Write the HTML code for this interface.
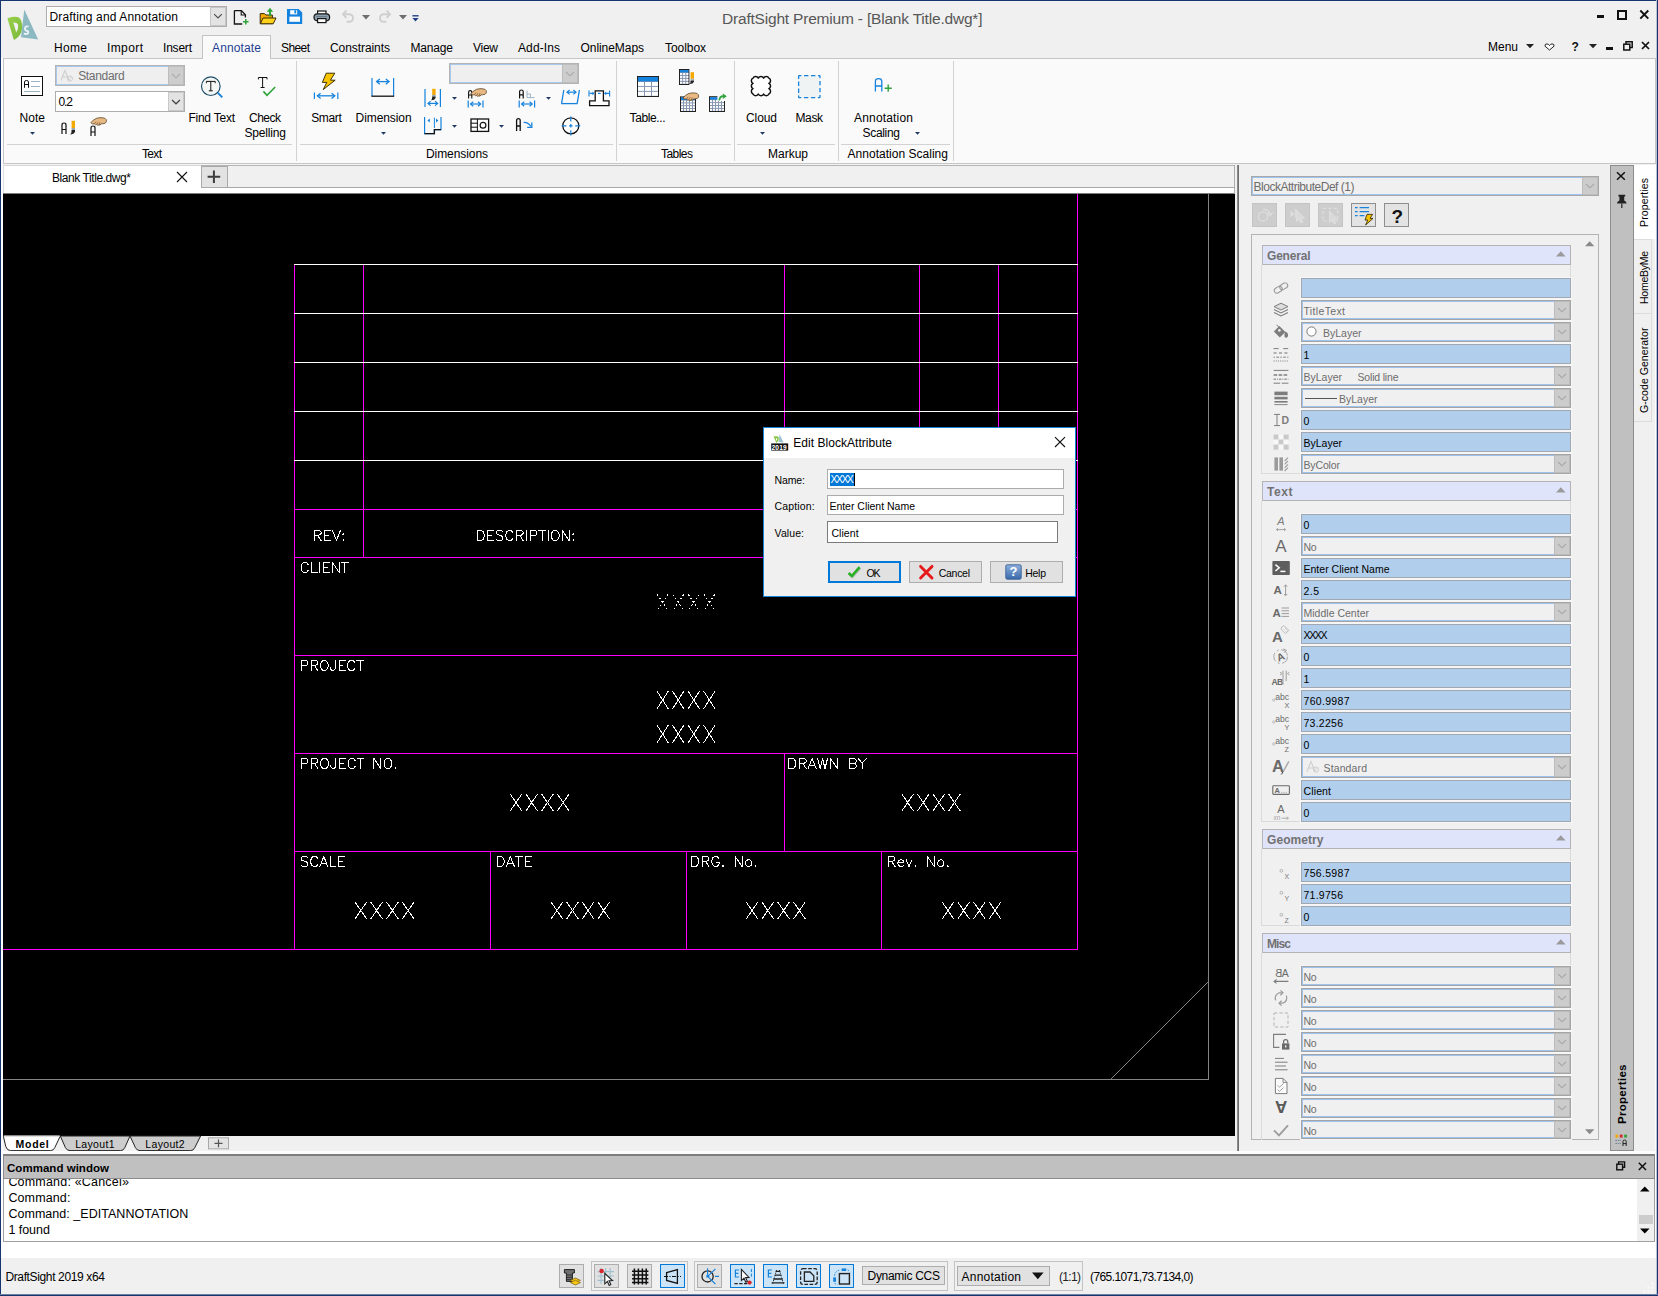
<!DOCTYPE html>
<html><head><meta charset="utf-8"><title>DraftSight Premium - [Blank Title.dwg*]</title>
<style>
html,body{margin:0;padding:0;}
body{width:1658px;height:1296px;overflow:hidden;background:#f0f0f0;font-family:"Liberation Sans", sans-serif;position:relative;}
div,svg{position:absolute;box-sizing:border-box;}
svg{overflow:visible;}
</style></head><body>
<div style="left:3px;top:58px;width:1653px;height:106px;background:#fafafa;border:1px solid #c6c6c6;"></div>
<div style="left:202px;top:35px;width:69px;height:24px;background:#fafafa;border:1px solid #c3c3c3;border-bottom:none;"></div>
<svg style="left:4px;top:6px;" width="38" height="38" viewBox="0 0 38 38"><defs><linearGradient id="lgD" x1="0" y1="0" x2="1" y2="1"><stop offset="0" stop-color="#9ad04a"/><stop offset="1" stop-color="#7ab83a"/></linearGradient></defs><path d="M20.3 3.6 L34.2 33.6 L17 31.2 Z" fill="#8cb8c2"/><path d="M3.4 12.2 Q10 10.2 14.5 11.2 Q18.6 14 18.2 22 Q17.5 29.5 10.8 33.8 L9.6 33.2 Z M9.3 16.6 L12.2 26.6 Q14.6 23.5 14.2 19.6 Q13.6 16.4 9.3 16.6 Z" fill="url(#lgD)" fill-rule="evenodd"/><path d="M24.6 20.6 Q21.2 19.8 20.9 22.4 Q20.8 24.4 23.2 25 Q24.8 25.6 24 27.2 Q23 28.6 19.8 27.6" fill="none" stroke="#e8f2f4" stroke-width="1.9"/></svg>
<div style="left:46px;top:6px;width:181px;height:21px;background:#fff;border:1px solid #adadad;"></div>
<div style="left:210px;top:7px;width:16px;height:19px;background:#e3e3e3;border:1px solid #c6c6c6;"></div>
<svg style="left:213px;top:13px;" width="10" height="7" viewBox="0 0 10 7"><path d="M1.2 1.2 L5 5 L8.8 1.2" fill="none" stroke="#505050" stroke-width="1.2"/></svg>
<div style="left:49.5px;top:11px;font-size:12px;line-height:12px;color:#000;white-space:pre;letter-spacing:0.139px;">Drafting and Annotation</div>
<svg style="left:233px;top:9px;" width="17" height="17" viewBox="0 0 17 17"><path d="M1.4 1.6 H8.4 L12.4 5.8 V8.6 M9.2 15 H1.4 V1.6" fill="none" stroke="#151515" stroke-width="1.3"/><path d="M8.2 1.8 V6 H12.4" fill="none" stroke="#151515" stroke-width="1.1"/><path d="M10 12.8 H15.6 M12.8 10 V15.6" stroke="#2ea43a" stroke-width="1.5"/></svg>
<svg style="left:259px;top:7px;" width="18" height="18" viewBox="0 0 18 18"><path d="M1.2 6.6 H5.4 L6.8 8 H13.4 V16.6 H1.2 Z" fill="#f5a800" stroke="#3a2a08" stroke-width="1"/><path d="M1.4 16.8 L4 11 H17 L14.2 16.8 Z" fill="#ffd21a" stroke="#3a2a08" stroke-width="1"/><path d="M11 9.6 V4" stroke="#2ea43a" stroke-width="2"/><path d="M7.8 4.8 L11 0.8 L14.2 4.8 Z" fill="#2ea43a"/></svg>
<svg style="left:287px;top:9px;" width="16" height="16" viewBox="0 0 16 16"><path d="M0 0 H11.6 L15.2 3.6 V15 H0 Z" fill="#1583dd"/><rect x="3.2" y="1.2" width="7" height="4.2" fill="#fff"/><rect x="7.4" y="1.2" width="1.8" height="3.2" fill="#1583dd"/><rect x="2.4" y="7.6" width="10.6" height="5.2" fill="#fff"/></svg>
<svg style="left:313px;top:10px;" width="18" height="14" viewBox="0 0 18 14"><rect x="4.6" y="1" width="8.4" height="3.6" fill="#fff" stroke="#151515" stroke-width="1.2"/><rect x="1" y="3.8" width="15.6" height="7" rx="3.2" fill="#8ea0ad" stroke="#151515" stroke-width="1.2"/><rect x="4.6" y="8.6" width="8.4" height="4" fill="#fff" stroke="#151515" stroke-width="1.2"/><path d="M3.4 6.6 H14.2" stroke="#5a6a76" stroke-width="0.8"/></svg>
<svg style="left:341px;top:9px;" width="14" height="15" viewBox="0 0 14 15"><path d="M2.4 5.2 H8 Q12 5.2 12 9 Q12 12.8 8 12.8 H5.6" fill="none" stroke="#cfcfcf" stroke-width="1.9"/><path d="M5.4 1.6 L2 5.2 L5.4 8.8" fill="none" stroke="#cfcfcf" stroke-width="1.9"/></svg>
<svg style="left:362px;top:14.5px;" width="8" height="5" viewBox="0 0 8 5"><path d="M0 0 H8 L4 4.6 Z" fill="#6e6e6e"/></svg>
<svg style="left:378px;top:9px;" width="14" height="15" viewBox="0 0 14 15"><path d="M11.6 5.2 H6 Q2 5.2 2 9 Q2 12.8 6 12.8 H8.4" fill="none" stroke="#cfcfcf" stroke-width="1.9"/><path d="M8.6 1.6 L12 5.2 L8.6 8.8" fill="none" stroke="#cfcfcf" stroke-width="1.9"/></svg>
<svg style="left:399px;top:14.5px;" width="8" height="5" viewBox="0 0 8 5"><path d="M0 0 H8 L4 4.6 Z" fill="#6e6e6e"/></svg>
<svg style="left:412px;top:14.5px;" width="7" height="7" viewBox="0 0 7 7"><path d="M0.4 0.8 H6.6" stroke="#1f3f8a" stroke-width="1.4"/><path d="M0.4 3 H6.6 L3.5 6.4 Z" fill="#1f3f8a"/></svg>
<div style="left:722px;top:11px;font-size:15.5px;line-height:15.5px;color:#575757;white-space:pre;letter-spacing:-0.195px;">DraftSight Premium - [Blank Title.dwg*]</div>
<div style="left:1597px;top:15px;width:7px;height:3px;background:#111;"></div>
<div style="left:1617px;top:10px;width:10px;height:10px;border:2px solid #111;border-top-width:2px;"></div>
<svg style="left:1639px;top:9px;" width="11" height="11" viewBox="0 0 11 11"><path d="M1.3 1.5 L9.3 9.7 M9.3 1.5 L1.3 9.7" stroke="#111" stroke-width="1.9"/></svg>
<div style="left:54px;top:42px;font-size:12px;line-height:12px;color:#000;white-space:pre;letter-spacing:0.328px;">Home</div>
<div style="left:107px;top:42px;font-size:12px;line-height:12px;color:#000;white-space:pre;letter-spacing:0.397px;">Import</div>
<div style="left:163px;top:42px;font-size:12px;line-height:12px;color:#000;white-space:pre;letter-spacing:-0.203px;">Insert</div>
<div style="left:212px;top:42px;font-size:12px;line-height:12px;color:#1e3f94;white-space:pre;letter-spacing:0.136px;">Annotate</div>
<div style="left:281px;top:42px;font-size:12px;line-height:12px;color:#000;white-space:pre;letter-spacing:-0.590px;">Sheet</div>
<div style="left:330px;top:42px;font-size:12px;line-height:12px;color:#000;white-space:pre;letter-spacing:-0.070px;">Constraints</div>
<div style="left:410.5px;top:42px;font-size:12px;line-height:12px;color:#000;white-space:pre;letter-spacing:-0.175px;">Manage</div>
<div style="left:473px;top:42px;font-size:12px;line-height:12px;color:#000;white-space:pre;letter-spacing:-0.266px;">View</div>
<div style="left:518px;top:42px;font-size:12px;line-height:12px;color:#000;white-space:pre;letter-spacing:0.107px;">Add-Ins</div>
<div style="left:580.5px;top:42px;font-size:12px;line-height:12px;color:#000;white-space:pre;letter-spacing:-0.059px;">OnlineMaps</div>
<div style="left:665px;top:42px;font-size:12px;line-height:12px;color:#000;white-space:pre;letter-spacing:-0.062px;">Toolbox</div>
<div style="left:1488px;top:41px;font-size:12px;line-height:12px;color:#000;white-space:pre;letter-spacing:-0.010px;">Menu</div>
<svg style="left:1526px;top:44px;" width="8" height="5" viewBox="0 0 8 5"><path d="M0 0 H8 L4 4.2 Z" fill="#222"/></svg>
<svg style="left:1544px;top:43px;" width="11" height="8" viewBox="0 0 11 8"><path d="M5.5 7 L1 3.2 Q0.6 0.8 3 0.9 Q4.6 1 5.5 2.6 Q6.4 1 8 0.9 Q10.4 0.8 10 3.2 Z" fill="#fff" stroke="#222" stroke-width="1"/></svg>
<div style="left:1571.5px;top:41px;font-size:12px;line-height:12px;color:#111;white-space:pre;font-weight:700;">?</div>
<svg style="left:1589px;top:44px;" width="8" height="5" viewBox="0 0 8 5"><path d="M0 0 H8 L4 4.2 Z" fill="#222"/></svg>
<div style="left:1606px;top:47px;width:7px;height:3px;background:#111;"></div>
<svg style="left:1623px;top:41px;" width="10" height="10" viewBox="0 0 10 10"><path d="M3 3 V0.8 H9.2 V6.5 H7" fill="none" stroke="#111" stroke-width="1.5"/><rect x="0.8" y="3.2" width="6" height="5.8" fill="none" stroke="#111" stroke-width="1.5"/></svg>
<svg style="left:1641px;top:41px;" width="9" height="9" viewBox="0 0 9 9"><path d="M1 1 L8 8 M8 1 L1 8" stroke="#111" stroke-width="1.7"/></svg>
<div style="left:296px;top:61px;width:1px;height:100px;background:#d2d2d2;"></div>
<div style="left:616px;top:61px;width:1px;height:100px;background:#d2d2d2;"></div>
<div style="left:734px;top:61px;width:1px;height:100px;background:#d2d2d2;"></div>
<div style="left:838px;top:61px;width:1px;height:100px;background:#d2d2d2;"></div>
<div style="left:953px;top:61px;width:1px;height:100px;background:#d2d2d2;"></div>
<div style="left:7px;top:144px;width:285px;height:1px;background:#d2d2d2;"></div>
<div style="left:300px;top:144px;width:313px;height:1px;background:#d2d2d2;"></div>
<div style="left:619px;top:144px;width:112px;height:1px;background:#d2d2d2;"></div>
<div style="left:737px;top:144px;width:98px;height:1px;background:#d2d2d2;"></div>
<div style="left:841px;top:144px;width:109px;height:1px;background:#d2d2d2;"></div>
<div style="left:142px;top:148px;font-size:12px;line-height:12px;color:#000;white-space:pre;letter-spacing:-0.672px;">Text</div>
<div style="left:426px;top:148px;font-size:12px;line-height:12px;color:#000;white-space:pre;letter-spacing:-0.078px;">Dimensions</div>
<div style="left:661px;top:148px;font-size:12px;line-height:12px;color:#000;white-space:pre;letter-spacing:-0.537px;">Tables</div>
<div style="left:768px;top:148px;font-size:12px;line-height:12px;color:#000;white-space:pre;letter-spacing:-0.003px;">Markup</div>
<div style="left:847.5px;top:148px;font-size:12px;line-height:12px;color:#000;white-space:pre;letter-spacing:0.025px;">Annotation Scaling</div>
<svg style="left:20px;top:75px;" width="24" height="22" viewBox="0 0 24 22"><rect x="1.5" y="1.5" width="21" height="19" fill="#fff" stroke="#111" stroke-width="1"/><path d="M4.5 12.8 V7 Q4.5 5.5 6.5 5.5 Q8.5 5.5 8.5 7 V12.8 M4.5 9.5 H8.5" fill="none" stroke="#111" stroke-width="1"/><path d="M11 6.5 H20 M11 11.5 H20 M4 16.5 H20" stroke="#9db4c4" stroke-width="1"/></svg>
<div style="left:19.6px;top:112px;font-size:12px;line-height:12px;color:#000;white-space:pre;letter-spacing:0.014px;">Note</div>
<svg style="left:29.799999999999997px;top:132px;" width="5" height="3" viewBox="0 0 5 3"><path d="M0 0 H5 L2.5 2.8 Z" fill="#1f3864"/></svg>
<div style="left:55px;top:65px;width:130px;height:21px;background:#e8e8e8;border:1px solid #b4b4b4;"></div>
<div style="left:56px;top:66px;width:113px;height:19px;background:#efefef;border:1px solid #a9c9ec;"></div>
<div style="left:168px;top:66px;width:16px;height:19px;background:#cdcdcd;border:1px solid #bdbdbd;"></div>
<svg style="left:171px;top:72.5px;" width="10" height="6" viewBox="0 0 10 6"><path d="M1 1 L5 4.8 L9 1" fill="none" stroke="#ababab" stroke-width="1.1"/></svg>
<svg style="left:60px;top:69px;" width="14" height="13" viewBox="0 0 14 13"><path d="M1 11.5 L5 1.5 L9 11.5 M2.6 8 H7.4" fill="none" stroke="#cfcfcf" stroke-width="1.1"/><circle cx="10" cy="9.6" r="2.6" fill="none" stroke="#cfcfcf" stroke-width="1"/><path d="M8.2 11.4 L11.8 7.8" stroke="#cfcfcf" stroke-width="1"/></svg>
<div style="left:78.2px;top:70px;font-size:12px;line-height:12px;color:#6d6d6d;white-space:pre;letter-spacing:-0.329px;">Standard</div>
<div style="left:55px;top:91px;width:130px;height:21px;background:#fff;border:1px solid #adadad;"></div>
<div style="left:168px;top:92px;width:16px;height:19px;background:#e3e3e3;border:1px solid #c9c9c9;"></div>
<svg style="left:171px;top:98.5px;" width="10" height="6" viewBox="0 0 10 6"><path d="M1 1 L5 4.8 L9 1" fill="none" stroke="#444" stroke-width="1.2"/></svg>
<div style="left:58.5px;top:96px;font-size:12px;line-height:12px;color:#000;white-space:pre;letter-spacing:-1.094px;">0.2</div>
<svg style="left:60px;top:120px;" width="18" height="16" viewBox="0 0 18 16"><path d="M2 14 V5 Q2 3 4 3 Q6 3 6 5 V14 M2 9.5 H6" fill="none" stroke="#111" stroke-width="1.2"/><rect x="11.6" y="0.8" width="3.4" height="7.4" fill="#f5a800"/><rect x="11.6" y="8" width="3.4" height="2" fill="#9aa7b0"/><path d="M11.6 10 H15 V12 Q14 14.6 10.2 14.4 Q11.8 13 11.6 10 Z" fill="#222"/></svg>
<svg style="left:89px;top:116px;" width="20" height="21" viewBox="0 0 20 21"><path d="M2 20 V12 Q2 10 4 10 Q6 10 6 12 V20 M2 16 H6" fill="none" stroke="#111" stroke-width="1.2"/><g transform="translate(1.4,1.2)"><path d="M0.4 5.6 Q2.6 2.4 6.4 1 Q10.6 -0.2 14.4 1 Q16.6 2.2 16 4.6 Q15.4 6.4 12.4 6.6 L10.6 6.6 Q10 8.4 8.4 7.8 Q7.4 8.6 6.2 7.4 Q5 8 4 6.6 Q2.4 7.4 0.4 5.6 Z" fill="#e9b983" stroke="#4a3418" stroke-width="0.7"/><path d="M5.6 4.4 L4.2 6.4 M7.6 4.8 L6.4 7.2 M9.6 5 L8.6 7.6" stroke="#4a3418" stroke-width="0.5" fill="none"/></g></svg>
<svg style="left:200px;top:75px;" width="24" height="24" viewBox="0 0 24 24"><circle cx="10.8" cy="11.2" r="9.3" fill="#f5f7f7" stroke="#1f4e69" stroke-width="1.2"/><path d="M6.4 8.2 V6.4 H15.2 V8.2 M10.8 6.4 V15.8 M8.8 15.8 H12.8" fill="none" stroke="#111" stroke-width="1"/><path d="M18 18 L22.3 22.3" stroke="#1583dd" stroke-width="1.8"/></svg>
<div style="left:188.4px;top:112px;font-size:12px;line-height:12px;color:#000;white-space:pre;letter-spacing:-0.234px;">Find Text</div>
<svg style="left:255px;top:76px;" width="22" height="22" viewBox="0 0 22 22"><path d="M3.4 3.4 V1.5 H12 V3.4 M7.6 1.5 V11.5 M5.6 11.5 H9.6" fill="none" stroke="#111" stroke-width="1"/><path d="M8.4 15.4 L12 19.4 L20.2 11" fill="none" stroke="#2ea43a" stroke-width="1.6"/></svg>
<div style="left:249px;top:112px;font-size:12px;line-height:12px;color:#000;white-space:pre;letter-spacing:-0.504px;">Check</div>
<div style="left:244.5px;top:127px;font-size:12px;line-height:12px;color:#000;white-space:pre;letter-spacing:-0.172px;">Spelling</div>
<svg style="left:312px;top:72px;" width="28" height="28" viewBox="0 0 28 28"><path d="M14.2 1.2 L22.8 1.2 L18.4 8.2 L23.2 8.2 L11.2 17.6 L14.8 10.4 L10.4 10.4 Z" fill="#f8c400" stroke="#2b2100" stroke-width="0.9"/><path d="M2.4 20.6 V27 M25.8 20.6 V27" stroke="#1583dd" stroke-width="1.2"/><path d="M5.5 23.8 H22.8" stroke="#1583dd" stroke-width="1.3"/><path d="M8.6 21.2 L5.4 23.8 L8.6 26.4 M19.6 21.2 L22.8 23.8 L19.6 26.4" fill="none" stroke="#1583dd" stroke-width="1.3"/></svg>
<div style="left:311.2px;top:112px;font-size:12px;line-height:12px;color:#000;white-space:pre;letter-spacing:-0.329px;">Smart</div>
<svg style="left:370px;top:77px;" width="26" height="21" viewBox="0 0 26 21"><path d="M2 1 V19 M23.6 1 V19" stroke="#1583dd" stroke-width="1.2"/><path d="M1.4 19.2 H24.2" stroke="#111" stroke-width="1.3"/><path d="M7 4.6 H18.6" stroke="#1583dd" stroke-width="1.3"/><path d="M9.8 2 L6.6 4.6 L9.8 7.2 M15.8 2 L19 4.6 L15.8 7.2" fill="none" stroke="#1583dd" stroke-width="1.3"/></svg>
<div style="left:355.6px;top:112px;font-size:12px;line-height:12px;color:#000;white-space:pre;letter-spacing:-0.088px;">Dimension</div>
<svg style="left:381.0px;top:132px;" width="5" height="3" viewBox="0 0 5 3"><path d="M0 0 H5 L2.5 2.8 Z" fill="#1f3864"/></svg>
<div style="left:449px;top:63px;width:130px;height:21px;background:#e8e8e8;border:1px solid #b4b4b4;"></div>
<div style="left:450px;top:64px;width:113px;height:19px;background:#efefef;border:1px solid #a9c9ec;"></div>
<div style="left:562px;top:64px;width:16px;height:19px;background:#cdcdcd;border:1px solid #bdbdbd;"></div>
<svg style="left:565px;top:70.5px;" width="10" height="6" viewBox="0 0 10 6"><path d="M1 1 L5 4.8 L9 1" fill="none" stroke="#ababab" stroke-width="1.1"/></svg>
<svg style="left:423px;top:88px;" width="20" height="20" viewBox="0 0 20 20"><path d="M2 1 V19 M17.4 1 V19" stroke="#1583dd" stroke-width="1.2"/><path d="M5 15.4 H14.6" stroke="#1583dd" stroke-width="1.2"/><path d="M7.6 13.2 L5 15.4 L7.6 17.6 M12.0 13.2 L14.6 15.4 L12.0 17.6" fill="none" stroke="#1583dd" stroke-width="1.2"/><rect x="9.2" y="0.8" width="3.4" height="6.2" fill="#f5a800"/><rect x="9.2" y="6.8" width="3.4" height="1.8" fill="#9aa7b0"/><path d="M9.2 8.6 H12.6 V10 Q11.6 12.4 8 12.2 Q9.4 11 9.2 8.6 Z" fill="#222"/></svg>
<svg style="left:452.3px;top:97px;" width="5" height="3" viewBox="0 0 5 3"><path d="M0 0 H5 L2.5 2.8 Z" fill="#1f3864"/></svg>
<svg style="left:467px;top:88px;" width="21" height="20" viewBox="0 0 21 20"><path d="M1.6 10.4 V4.2 Q1.6 2.6 3.2 2.6 Q4.8 2.6 4.8 4.2 V10.4 M1.6 7 H4.8" fill="none" stroke="#111" stroke-width="1.1"/><g transform="translate(3.4,0.2)"><path d="M0.4 5.6 Q2.6 2.4 6.4 1 Q10.6 -0.2 14.4 1 Q16.6 2.2 16 4.6 Q15.4 6.4 12.4 6.6 L10.6 6.6 Q10 8.4 8.4 7.8 Q7.4 8.6 6.2 7.4 Q5 8 4 6.6 Q2.4 7.4 0.4 5.6 Z" fill="#e9b983" stroke="#4a3418" stroke-width="0.7"/><path d="M5.6 4.4 L4.2 6.4 M7.6 4.8 L6.4 7.2 M9.6 5 L8.6 7.6" stroke="#4a3418" stroke-width="0.5" fill="none"/></g><path d="M1.2 12.6 V19.4 M16 12.6 V19.4" stroke="#1583dd" stroke-width="1.2"/><path d="M3.6 16 H13.6" stroke="#1583dd" stroke-width="1.2"/><path d="M6.2 13.8 L3.6 16 L6.2 18.2 M11.0 13.8 L13.6 16 L11.0 18.2" fill="none" stroke="#1583dd" stroke-width="1.2"/></svg>
<svg style="left:518px;top:88px;" width="19" height="20" viewBox="0 0 19 20"><path d="M1.6 10.4 V3.6 Q1.6 2 3.4 2 Q5.2 2 5.2 3.6 V10.4 M1.6 6.8 H5.2" fill="none" stroke="#111" stroke-width="1.2"/><path d="M9 2.6 V9.6 H16.6 M9 6 H12.4 V9.6" fill="none" stroke="#9bb4c8" stroke-width="1"/><path d="M1.2 12.6 V19.4 M16.6 12.6 V19.4" stroke="#1583dd" stroke-width="1.2"/><path d="M3.6 16 H14.2" stroke="#1583dd" stroke-width="1.2"/><path d="M6.2 13.8 L3.6 16 L6.2 18.2 M11.6 13.8 L14.2 16 L11.6 18.2" fill="none" stroke="#1583dd" stroke-width="1.2"/></svg>
<svg style="left:546.0px;top:97px;" width="5" height="3" viewBox="0 0 5 3"><path d="M0 0 H5 L2.5 2.8 Z" fill="#1f3864"/></svg>
<svg style="left:560px;top:88px;" width="21" height="18" viewBox="0 0 21 18"><path d="M3.8 2 L1.6 15.4 M19.4 2 L17.2 15.4" stroke="#1583dd" stroke-width="1.3"/><path d="M1.2 15.6 H17.6" stroke="#1583dd" stroke-width="1.3"/><path d="M7 4.2 H16" stroke="#1583dd" stroke-width="1.2"/><path d="M9.6 2.0 L7 4.2 L9.6 6.4 M13.4 2.0 L16 4.2 L13.4 6.4" fill="none" stroke="#1583dd" stroke-width="1.2"/></svg>
<svg style="left:588px;top:88px;" width="23" height="19" viewBox="0 0 23 19"><path d="M1.6 17.6 H21 V12.8 H15.4 V2.8 H7.2 V12.8 H1.6 Z" fill="#fff" stroke="#111" stroke-width="1.3"/><path d="M1 2.4 V8.6 M21.6 2.4 V8.6" stroke="#1583dd" stroke-width="1.1"/><path d="M1.6 5.4 H6 M16.6 5.4 H21 M10 5.4 H12.6" stroke="#1583dd" stroke-width="1.1"/><path d="M4.4 3.6 L6.4 5.4 L4.4 7.2 Z M18.2 3.6 L16.2 5.4 L18.2 7.2 Z" fill="#1583dd"/></svg>
<svg style="left:423px;top:116px;" width="20" height="19" viewBox="0 0 20 19"><path d="M1.6 1 V17.6 H11.4 V13.6 H18 V1" fill="none" stroke="#1583dd" stroke-width="1.2"/><path d="M1.6 17.6 H11.4 V13.6 H18" fill="none" stroke="#111" stroke-width="1.3"/><path d="M6.8 2.6 L4.4 4.6 L6.8 6.6 Z M13 2.6 L15.4 4.6 L13 6.6 Z" fill="#1583dd"/><path d="M11.4 1.6 V12" stroke="#1583dd" stroke-width="1"/></svg>
<svg style="left:452.3px;top:124.6px;" width="5" height="3" viewBox="0 0 5 3"><path d="M0 0 H5 L2.5 2.8 Z" fill="#1f3864"/></svg>
<svg style="left:470px;top:118px;" width="20" height="15" viewBox="0 0 20 15"><rect x="1" y="1" width="17.6" height="12.4" fill="#fff" stroke="#111" stroke-width="1.3"/><path d="M7.4 1 V13.4 M1 5.2 H7.4 M1 9.2 H7.4" stroke="#111" stroke-width="1"/><circle cx="13" cy="7.2" r="2.9" fill="none" stroke="#111" stroke-width="1.2"/></svg>
<svg style="left:499.1px;top:124.6px;" width="5" height="3" viewBox="0 0 5 3"><path d="M0 0 H5 L2.5 2.8 Z" fill="#1f3864"/></svg>
<svg style="left:515px;top:117px;" width="19" height="16" viewBox="0 0 19 16"><path d="M1.6 14 V3.6 Q1.6 1.6 3.4 1.6 Q5.2 1.6 5.2 3.6 V14 M1.6 9 H5.2" fill="none" stroke="#111" stroke-width="1.3"/><path d="M8.6 5.4 Q13 5 15.8 9.4" fill="none" stroke="#1583dd" stroke-width="1.3"/><path d="M16.8 5.6 V10.4 H12.2" fill="none" stroke="#1583dd" stroke-width="1.3"/></svg>
<svg style="left:561px;top:116px;" width="20" height="20" viewBox="0 0 20 20"><circle cx="9.8" cy="9.8" r="8" fill="#fff" stroke="#111" stroke-width="1.3"/><path d="M9.8 0.4 V5.4 M9.8 14.2 V19.4 M0.6 9.8 H5.4 M14.2 9.8 H19.2 M8 9.8 H11.6 M9.8 8 V11.6" stroke="#1583dd" stroke-width="1.2"/></svg>
<svg style="left:637px;top:76px;" width="22" height="21" viewBox="0 0 22 21"><rect x="0" y="0" width="22" height="21" fill="#222"/><rect x="1" y="1" width="20" height="19" fill="#8797b2"/><rect x="1" y="1" width="20" height="4.4" fill="#1583dd"/><rect x="1.00" y="6.00" width="6.00" height="3.93" fill="#fff"/><rect x="1.00" y="10.93" width="6.00" height="3.93" fill="#fff"/><rect x="1.00" y="15.87" width="6.00" height="3.93" fill="#fff"/><rect x="8.00" y="6.00" width="6.00" height="3.93" fill="#fff"/><rect x="8.00" y="10.93" width="6.00" height="3.93" fill="#fff"/><rect x="8.00" y="15.87" width="6.00" height="3.93" fill="#fff"/><rect x="15.00" y="6.00" width="6.00" height="3.93" fill="#fff"/><rect x="15.00" y="10.93" width="6.00" height="3.93" fill="#fff"/><rect x="15.00" y="15.87" width="6.00" height="3.93" fill="#fff"/></svg>
<div style="left:629.6px;top:112px;font-size:12px;line-height:12px;color:#000;white-space:pre;letter-spacing:-0.386px;">Table...</div>
<svg style="left:679px;top:69px;" width="19" height="17" viewBox="0 0 19 17"><rect x="0" y="0" width="10.4" height="16" fill="#222"/><rect x="1" y="1" width="8.4" height="14" fill="#8797b2"/><rect x="1" y="1" width="8.4" height="2.4" fill="#1583dd"/><rect x="1.00" y="4.00" width="2.13" height="1.95" fill="#fff"/><rect x="1.00" y="6.95" width="2.13" height="1.95" fill="#fff"/><rect x="1.00" y="9.90" width="2.13" height="1.95" fill="#fff"/><rect x="1.00" y="12.85" width="2.13" height="1.95" fill="#fff"/><rect x="4.13" y="4.00" width="2.13" height="1.95" fill="#fff"/><rect x="4.13" y="6.95" width="2.13" height="1.95" fill="#fff"/><rect x="4.13" y="9.90" width="2.13" height="1.95" fill="#fff"/><rect x="4.13" y="12.85" width="2.13" height="1.95" fill="#fff"/><rect x="7.27" y="4.00" width="2.13" height="1.95" fill="#fff"/><rect x="7.27" y="6.95" width="2.13" height="1.95" fill="#fff"/><rect x="7.27" y="9.90" width="2.13" height="1.95" fill="#fff"/><rect x="7.27" y="12.85" width="2.13" height="1.95" fill="#fff"/><g transform="translate(11.6,3.2)"><rect x="0" y="0" width="3.4" height="6.6" fill="#f5a800"/><rect x="0" y="6.6" width="3.4" height="1.6" fill="#a9b6c0"/><path d="M0 8.2 H3.4 V9.6 Q2.4 12 -1.4 11.8 Q0.2 10.6 0 8.2 Z" fill="#222"/></g></svg>
<svg style="left:680px;top:92px;" width="20" height="21" viewBox="0 0 20 21"><g transform="translate(0,4.4)"><rect x="0" y="0" width="16" height="15.6" fill="#222"/><rect x="1" y="1" width="14" height="13.6" fill="#8797b2"/><rect x="1" y="1" width="14" height="2.6" fill="#1583dd"/><rect x="1.00" y="4.20" width="2.00" height="1.80" fill="#fff"/><rect x="1.00" y="7.00" width="2.00" height="1.80" fill="#fff"/><rect x="1.00" y="9.80" width="2.00" height="1.80" fill="#fff"/><rect x="1.00" y="12.60" width="2.00" height="1.80" fill="#fff"/><rect x="4.00" y="4.20" width="2.00" height="1.80" fill="#fff"/><rect x="4.00" y="7.00" width="2.00" height="1.80" fill="#fff"/><rect x="4.00" y="9.80" width="2.00" height="1.80" fill="#fff"/><rect x="4.00" y="12.60" width="2.00" height="1.80" fill="#fff"/><rect x="7.00" y="4.20" width="2.00" height="1.80" fill="#fff"/><rect x="7.00" y="7.00" width="2.00" height="1.80" fill="#fff"/><rect x="7.00" y="9.80" width="2.00" height="1.80" fill="#fff"/><rect x="7.00" y="12.60" width="2.00" height="1.80" fill="#fff"/><rect x="10.00" y="4.20" width="2.00" height="1.80" fill="#fff"/><rect x="10.00" y="7.00" width="2.00" height="1.80" fill="#fff"/><rect x="10.00" y="9.80" width="2.00" height="1.80" fill="#fff"/><rect x="10.00" y="12.60" width="2.00" height="1.80" fill="#fff"/><rect x="13.00" y="4.20" width="2.00" height="1.80" fill="#fff"/><rect x="13.00" y="7.00" width="2.00" height="1.80" fill="#fff"/><rect x="13.00" y="9.80" width="2.00" height="1.80" fill="#fff"/><rect x="13.00" y="12.60" width="2.00" height="1.80" fill="#fff"/></g><g transform="translate(2.6,0.4)"><path d="M0.4 5.6 Q2.6 2.4 6.4 1 Q10.6 -0.2 14.4 1 Q16.6 2.2 16 4.6 Q15.4 6.4 12.4 6.6 L10.6 6.6 Q10 8.4 8.4 7.8 Q7.4 8.6 6.2 7.4 Q5 8 4 6.6 Q2.4 7.4 0.4 5.6 Z" fill="#e9b983" stroke="#4a3418" stroke-width="0.7"/><path d="M5.6 4.4 L4.2 6.4 M7.6 4.8 L6.4 7.2 M9.6 5 L8.6 7.6" stroke="#4a3418" stroke-width="0.5" fill="none"/></g></svg>
<svg style="left:709px;top:93px;" width="20" height="20" viewBox="0 0 20 20"><g transform="translate(0,3.2)"><rect x="0" y="0" width="16" height="15.8" fill="#222"/><rect x="1" y="1" width="14" height="13.8" fill="#8797b2"/><rect x="1" y="1" width="14" height="2.4" fill="#1583dd"/><rect x="1.00" y="4.00" width="2.00" height="1.90" fill="#fff"/><rect x="1.00" y="6.90" width="2.00" height="1.90" fill="#fff"/><rect x="1.00" y="9.80" width="2.00" height="1.90" fill="#fff"/><rect x="1.00" y="12.70" width="2.00" height="1.90" fill="#fff"/><rect x="4.00" y="4.00" width="2.00" height="1.90" fill="#fff"/><rect x="4.00" y="6.90" width="2.00" height="1.90" fill="#fff"/><rect x="4.00" y="9.80" width="2.00" height="1.90" fill="#fff"/><rect x="4.00" y="12.70" width="2.00" height="1.90" fill="#fff"/><rect x="7.00" y="4.00" width="2.00" height="1.90" fill="#fff"/><rect x="7.00" y="6.90" width="2.00" height="1.90" fill="#fff"/><rect x="7.00" y="9.80" width="2.00" height="1.90" fill="#fff"/><rect x="7.00" y="12.70" width="2.00" height="1.90" fill="#fff"/><rect x="10.00" y="4.00" width="2.00" height="1.90" fill="#fff"/><rect x="10.00" y="6.90" width="2.00" height="1.90" fill="#fff"/><rect x="10.00" y="9.80" width="2.00" height="1.90" fill="#fff"/><rect x="10.00" y="12.70" width="2.00" height="1.90" fill="#fff"/><rect x="13.00" y="4.00" width="2.00" height="1.90" fill="#fff"/><rect x="13.00" y="6.90" width="2.00" height="1.90" fill="#fff"/><rect x="13.00" y="9.80" width="2.00" height="1.90" fill="#fff"/><rect x="13.00" y="12.70" width="2.00" height="1.90" fill="#fff"/></g><rect x="8.4" y="2.6" width="9" height="5.4" fill="#fafafa"/><path d="M10.4 7.6 Q10.4 3.2 14.4 3.2" fill="none" stroke="#2ea43a" stroke-width="1.7"/><path d="M13.8 0.4 L17.8 3.2 L13.8 6 Z" fill="#2ea43a"/></svg>
<svg style="left:750px;top:75px;" width="22" height="22" viewBox="0 0 22 22"><path d="M3 3.1 a2.95 2.95 0 0 1 5.3 0 a2.95 2.95 0 0 1 5.3 0 a2.95 2.95 0 0 1 5.3 0 a2.95 2.95 0 0 1 0 5.3 a2.95 2.95 0 0 1 0 5.3 a2.95 2.95 0 0 1 0 5.3 a2.95 2.95 0 0 1 -5.3 0 a2.95 2.95 0 0 1 -5.3 0 a2.95 2.95 0 0 1 -5.3 0 a2.95 2.95 0 0 1 0 -5.3 a2.95 2.95 0 0 1 0 -5.3 a2.95 2.95 0 0 1 0 -5.3 Z" fill="#fff" stroke="#111" stroke-width="1.5" stroke-linejoin="round"/></svg>
<div style="left:746px;top:112px;font-size:12px;line-height:12px;color:#000;white-space:pre;letter-spacing:-0.090px;">Cloud</div>
<svg style="left:759.5px;top:132px;" width="5" height="3" viewBox="0 0 5 3"><path d="M0 0 H5 L2.5 2.8 Z" fill="#1f3864"/></svg>
<svg style="left:797px;top:74px;" width="25" height="25" viewBox="0 0 25 25"><rect x="1.6" y="1.6" width="21.4" height="22" rx="0.6" fill="#eff3f4" stroke="#1583dd" stroke-width="1.3" stroke-dasharray="4.4 2.6" stroke-dashoffset="2.2"/></svg>
<div style="left:795.5px;top:112px;font-size:12px;line-height:12px;color:#000;white-space:pre;letter-spacing:-0.391px;">Mask</div>
<svg style="left:873px;top:77px;" width="21" height="17" viewBox="0 0 21 17"><path d="M2.4 14.6 V4.4 Q2.4 1.6 5.6 1.6 Q8.8 1.6 8.8 4.4 V14.6 M2.4 9 H8.8" fill="none" stroke="#1583dd" stroke-width="1.3"/><path d="M11.6 11.2 H18.8 M15.2 7.6 V14.8" stroke="#2ea43a" stroke-width="1.4"/></svg>
<div style="left:854px;top:112px;font-size:12px;line-height:12px;color:#000;white-space:pre;letter-spacing:0.179px;">Annotation</div>
<div style="left:862.5px;top:127px;font-size:12px;line-height:12px;color:#000;white-space:pre;letter-spacing:-0.310px;">Scaling</div>
<svg style="left:915.2px;top:132px;" width="5" height="3" viewBox="0 0 5 3"><path d="M0 0 H5 L2.5 2.8 Z" fill="#1f3864"/></svg>
<div style="left:3px;top:164px;width:1232px;height:1px;background:#f4f4f4;"></div>
<div style="left:3px;top:165px;width:1232px;height:29px;background:#fff;"></div>
<div style="left:3px;top:165px;width:198px;height:1px;background:#d6d6d6;"></div>
<div style="left:3px;top:165px;width:1px;height:28px;background:#dedede;"></div>
<div style="left:201px;top:165px;width:1034px;height:23px;background:#f0f0f0;border:1px solid #b4b4b4;border-left:none;border-right:none;border-bottom-color:#a6a6a6;"></div>
<div style="left:201px;top:166px;width:27px;height:22px;background:#e2e2e2;border:1px solid #a9a9a9;"></div>
<svg style="left:207px;top:170px;" width="14" height="14" viewBox="0 0 14 14"><path d="M0.6 6.8 H13.2 M6.9 0.6 V13" stroke="#3c3c3c" stroke-width="2"/></svg>
<div style="left:52px;top:172px;font-size:12px;line-height:12px;color:#000;white-space:pre;letter-spacing:-0.426px;">Blank Title.dwg*</div>
<svg style="left:176px;top:171px;" width="12" height="12" viewBox="0 0 12 12"><path d="M1 1 L11 11 M11 1 L1 11" stroke="#111" stroke-width="1.1"/></svg>
<div style="left:3px;top:193px;width:1232px;height:1px;background:#7e7e7e;"></div>
<svg style="left:3px;top:194px;background:#000;overflow:hidden" width="1232" height="942" viewBox="0 0 1232 942" shape-rendering="auto"><rect x="1205" y="0" width="1" height="886" fill="#848484"/><rect x="0" y="885" width="1206" height="1" fill="#848484"/><path d="M1107 885.5h1 M1108 884.5h1 M1109 883.5h1 M1110 882.5h1 M1111 881.5h1 M1112 880.5h1 M1113 879.5h1 M1114 878.5h1 M1115 877.5h1 M1116 876.5h1 M1117 875.5h1 M1118 874.5h1 M1119 873.5h1 M1120 872.5h1 M1121 871.5h1 M1122 870.5h1 M1123 869.5h1 M1124 868.5h1 M1125 867.5h1 M1126 866.5h1 M1127 865.5h1 M1128 864.5h1 M1129 863.5h1 M1130 862.5h1 M1131 861.5h1 M1132 860.5h1 M1133 859.5h1 M1134 858.5h1 M1135 857.5h1 M1136 856.5h1 M1137 855.5h1 M1138 854.5h1 M1139 853.5h1 M1140 852.5h1 M1141 851.5h1 M1142 850.5h1 M1143 849.5h1 M1144 848.5h1 M1145 847.5h1 M1146 846.5h1 M1147 845.5h1 M1148 844.5h1 M1149 843.5h1 M1150 842.5h1 M1151 841.5h1 M1152 840.5h1 M1153 839.5h1 M1154 838.5h1 M1155 837.5h1 M1156 836.5h1 M1157 835.5h1 M1158 834.5h1 M1159 833.5h1 M1160 832.5h1 M1161 831.5h1 M1162 830.5h1 M1163 829.5h1 M1164 828.5h1 M1165 827.5h1 M1166 826.5h1 M1167 825.5h1 M1168 824.5h1 M1169 823.5h1 M1170 822.5h1 M1171 821.5h1 M1172 820.5h1 M1173 819.5h1 M1174 818.5h1 M1175 817.5h1 M1176 816.5h1 M1177 815.5h1 M1178 814.5h1 M1179 813.5h1 M1180 812.5h1 M1181 811.5h1 M1182 810.5h1 M1183 809.5h1 M1184 808.5h1 M1185 807.5h1 M1186 806.5h1 M1187 805.5h1 M1188 804.5h1 M1189 803.5h1 M1190 802.5h1 M1191 801.5h1 M1192 800.5h1 M1193 799.5h1 M1194 798.5h1 M1195 797.5h1 M1196 796.5h1 M1197 795.5h1 M1198 794.5h1 M1199 793.5h1 M1200 792.5h1 M1201 791.5h1 M1202 790.5h1 M1203 789.5h1 M1204 788.5h1" stroke="#848484" stroke-width="1" fill="none" shape-rendering="crispEdges"/><rect x="291" y="315" width="784" height="1" fill="#ff00ff"/><rect x="291" y="363" width="784" height="1" fill="#ff00ff"/><rect x="291" y="461" width="784" height="1" fill="#ff00ff"/><rect x="291" y="559" width="784" height="1" fill="#ff00ff"/><rect x="291" y="657" width="784" height="1" fill="#ff00ff"/><rect x="0" y="755" width="1075" height="1" fill="#ff00ff"/><rect x="291" y="70" width="1" height="686" fill="#ff00ff"/><rect x="1074" y="0" width="1" height="756" fill="#ff00ff"/><rect x="360" y="70" width="1" height="294" fill="#ff00ff"/><rect x="781" y="70" width="1" height="294" fill="#ff00ff"/><rect x="916" y="70" width="1" height="294" fill="#ff00ff"/><rect x="995" y="70" width="1" height="294" fill="#ff00ff"/><rect x="781" y="559" width="1" height="99" fill="#ff00ff"/><rect x="487" y="657" width="1" height="99" fill="#ff00ff"/><rect x="683" y="657" width="1" height="99" fill="#ff00ff"/><rect x="878" y="657" width="1" height="99" fill="#ff00ff"/><rect x="291" y="70" width="784" height="1" fill="#fff"/><rect x="291" y="119" width="784" height="1" fill="#fff"/><rect x="291" y="168" width="784" height="1" fill="#fff"/><rect x="291" y="217" width="784" height="1" fill="#fff"/><rect x="291" y="266" width="784" height="1" fill="#fff"/><path d="M311.10 336.50 L311.10 346.50 M311.10 336.50 L315.57 336.50 L317.06 336.98 L317.56 337.45 L318.05 338.40 L318.05 339.36 L317.56 340.31 L317.06 340.79 L315.57 341.26 L311.10 341.26 M314.58 341.26 L318.05 346.50 M321.53 336.50 L321.53 346.50 M321.53 336.50 L327.99 336.50 M321.53 341.26 L325.50 341.26 M321.53 346.50 L327.99 346.50 M329.48 336.50 L333.45 346.50 M337.42 336.50 L333.45 346.50 M340.40 339.83 L339.91 340.31 L340.40 340.79 L340.90 340.31 L340.40 339.83 M340.40 345.55 L339.91 346.02 L340.40 346.50 L340.90 346.02 L340.40 345.55" fill="none" stroke="#fff" stroke-width="1.0" stroke-linecap="square" stroke-linejoin="round" shape-rendering="crispEdges"/><path d="M474.50 336.50 L474.50 346.50 M474.50 336.50 L477.86 336.50 L479.30 336.98 L480.26 337.93 L480.73 338.88 L481.21 340.31 L481.21 342.69 L480.73 344.12 L480.26 345.07 L479.30 346.02 L477.86 346.50 L474.50 346.50 M484.57 336.50 L484.57 346.50 M484.57 336.50 L490.81 336.50 M484.57 341.26 L488.41 341.26 M484.57 346.50 L490.81 346.50 M499.92 337.93 L498.96 336.98 L497.52 336.50 L495.60 336.50 L494.16 336.98 L493.20 337.93 L493.20 338.88 L493.68 339.83 L494.16 340.31 L495.12 340.79 L498.00 341.74 L498.96 342.21 L499.44 342.69 L499.92 343.64 L499.92 345.07 L498.96 346.02 L497.52 346.50 L495.60 346.50 L494.16 346.02 L493.20 345.07 M509.99 338.88 L509.51 337.93 L508.55 336.98 L507.59 336.50 L505.67 336.50 L504.71 336.98 L503.76 337.93 L503.28 338.88 L502.80 340.31 L502.80 342.69 L503.28 344.12 L503.76 345.07 L504.71 346.02 L505.67 346.50 L507.59 346.50 L508.55 346.02 L509.51 345.07 L509.99 344.12 M513.35 336.50 L513.35 346.50 M513.35 336.50 L517.66 336.50 L519.10 336.98 L519.58 337.45 L520.06 338.40 L520.06 339.36 L519.58 340.31 L519.10 340.79 L517.66 341.26 L513.35 341.26 M516.70 341.26 L520.06 346.50 M523.42 336.50 L523.42 346.50 M527.26 336.50 L527.26 346.50 M527.26 336.50 L531.57 336.50 L533.01 336.98 L533.49 337.45 L533.97 338.40 L533.97 339.83 L533.49 340.79 L533.01 341.26 L531.57 341.74 L527.26 341.74 M539.25 336.50 L539.25 346.50 M535.89 336.50 L542.60 336.50 M545.00 336.50 L545.00 346.50 M551.24 336.50 L550.28 336.98 L549.32 337.93 L548.84 338.88 L548.36 340.31 L548.36 342.69 L548.84 344.12 L549.32 345.07 L550.28 346.02 L551.24 346.50 L553.15 346.50 L554.11 346.02 L555.07 345.07 L555.55 344.12 L556.03 342.69 L556.03 340.31 L555.55 338.88 L555.07 337.93 L554.11 336.98 L553.15 336.50 L551.24 336.50 M559.39 336.50 L559.39 346.50 M559.39 336.50 L566.10 346.50 M566.10 336.50 L566.10 346.50 M570.42 339.83 L569.94 340.31 L570.42 340.79 L570.90 340.31 L570.42 339.83 M570.42 345.55 L569.94 346.02 L570.42 346.50 L570.90 346.02 L570.42 345.55" fill="none" stroke="#fff" stroke-width="1.0" stroke-linecap="square" stroke-linejoin="round" shape-rendering="crispEdges"/><path d="M305.17 370.88 L304.69 369.93 L303.73 368.98 L302.78 368.50 L300.87 368.50 L299.91 368.98 L298.96 369.93 L298.48 370.88 L298.00 372.31 L298.00 374.69 L298.48 376.12 L298.96 377.07 L299.91 378.02 L300.87 378.50 L302.78 378.50 L303.73 378.02 L304.69 377.07 L305.17 376.12 M308.51 368.50 L308.51 378.50 M308.51 378.50 L314.24 378.50 M316.63 368.50 L316.63 378.50 M320.46 368.50 L320.46 378.50 M320.46 368.50 L326.67 368.50 M320.46 373.26 L324.28 373.26 M320.46 378.50 L326.67 378.50 M329.53 368.50 L329.53 378.50 M329.53 368.50 L336.22 378.50 M336.22 368.50 L336.22 378.50 M341.96 368.50 L341.96 378.50 M338.61 368.50 L345.30 368.50" fill="none" stroke="#fff" stroke-width="1.0" stroke-linecap="square" stroke-linejoin="round" shape-rendering="crispEdges"/><path d="M298.00 466.50 L298.00 476.50 M298.00 466.50 L302.29 466.50 L303.72 466.98 L304.19 467.45 L304.67 468.40 L304.67 469.83 L304.19 470.79 L303.72 471.26 L302.29 471.74 L298.00 471.74 M308.00 466.50 L308.00 476.50 M308.00 466.50 L312.29 466.50 L313.72 466.98 L314.20 467.45 L314.67 468.40 L314.67 469.36 L314.20 470.31 L313.72 470.79 L312.29 471.26 L308.00 471.26 M311.34 471.26 L314.67 476.50 M320.39 466.50 L319.44 466.98 L318.48 467.93 L318.01 468.88 L317.53 470.31 L317.53 472.69 L318.01 474.12 L318.48 475.07 L319.44 476.02 L320.39 476.50 L322.29 476.50 L323.25 476.02 L324.20 475.07 L324.67 474.12 L325.15 472.69 L325.15 470.31 L324.67 468.88 L324.20 467.93 L323.25 466.98 L322.29 466.50 L320.39 466.50 M332.30 466.50 L332.30 474.12 L331.82 475.55 L331.34 476.02 L330.39 476.50 L329.44 476.50 L328.49 476.02 L328.01 475.55 L327.53 474.12 L327.53 473.17 M336.11 466.50 L336.11 476.50 M336.11 466.50 L342.30 466.50 M336.11 471.26 L339.92 471.26 M336.11 476.50 L342.30 476.50 M351.83 468.88 L351.35 467.93 L350.40 466.98 L349.44 466.50 L347.54 466.50 L346.59 466.98 L345.63 467.93 L345.16 468.88 L344.68 470.31 L344.68 472.69 L345.16 474.12 L345.63 475.07 L346.59 476.02 L347.54 476.50 L349.44 476.50 L350.40 476.02 L351.35 475.07 L351.83 474.12 M357.07 466.50 L357.07 476.50 M353.73 466.50 L360.40 466.50" fill="none" stroke="#fff" stroke-width="1.0" stroke-linecap="square" stroke-linejoin="round" shape-rendering="crispEdges"/><path d="M298.00 564.50 L298.00 574.50 M298.00 564.50 L302.32 564.50 L303.76 564.98 L304.24 565.45 L304.72 566.40 L304.72 567.83 L304.24 568.79 L303.76 569.26 L302.32 569.74 L298.00 569.74 M308.08 564.50 L308.08 574.50 M308.08 564.50 L312.39 564.50 L313.83 564.98 L314.31 565.45 L314.79 566.40 L314.79 567.36 L314.31 568.31 L313.83 568.79 L312.39 569.26 L308.08 569.26 M311.43 569.26 L314.79 574.50 M320.55 564.50 L319.59 564.98 L318.63 565.93 L318.15 566.88 L317.67 568.31 L317.67 570.69 L318.15 572.12 L318.63 573.07 L319.59 574.02 L320.55 574.50 L322.47 574.50 L323.43 574.02 L324.39 573.07 L324.87 572.12 L325.35 570.69 L325.35 568.31 L324.87 566.88 L324.39 565.93 L323.43 564.98 L322.47 564.50 L320.55 564.50 M332.55 564.50 L332.55 572.12 L332.07 573.55 L331.59 574.02 L330.63 574.50 L329.67 574.50 L328.71 574.02 L328.23 573.55 L327.75 572.12 L327.75 571.17 M336.38 564.50 L336.38 574.50 M336.38 564.50 L342.62 564.50 M336.38 569.26 L340.22 569.26 M336.38 574.50 L342.62 574.50 M352.22 566.88 L351.74 565.93 L350.78 564.98 L349.82 564.50 L347.90 564.50 L346.94 564.98 L345.98 565.93 L345.50 566.88 L345.02 568.31 L345.02 570.69 L345.50 572.12 L345.98 573.07 L346.94 574.02 L347.90 574.50 L349.82 574.50 L350.78 574.02 L351.74 573.07 L352.22 572.12 M357.49 564.50 L357.49 574.50 M354.14 564.50 L360.85 564.50 M370.93 564.50 L370.93 574.50 M370.93 564.50 L377.65 574.50 M377.65 564.50 L377.65 574.50 M383.88 564.50 L382.92 564.98 L381.96 565.93 L381.48 566.88 L381.01 568.31 L381.01 570.69 L381.48 572.12 L381.96 573.07 L382.92 574.02 L383.88 574.50 L385.80 574.50 L386.76 574.02 L387.72 573.07 L388.20 572.12 L388.68 570.69 L388.68 568.31 L388.20 566.88 L387.72 565.93 L386.76 564.98 L385.80 564.50 L383.88 564.50 M392.52 573.55 L392.04 574.02 L392.52 574.50 L393.00 574.02 L392.52 573.55" fill="none" stroke="#fff" stroke-width="1.0" stroke-linecap="square" stroke-linejoin="round" shape-rendering="crispEdges"/><path d="M785.80 564.50 L785.80 574.50 M785.80 564.50 L789.27 564.50 L790.76 564.98 L791.75 565.93 L792.25 566.88 L792.75 568.31 L792.75 570.69 L792.25 572.12 L791.75 573.07 L790.76 574.02 L789.27 574.50 L785.80 574.50 M796.22 564.50 L796.22 574.50 M796.22 564.50 L800.68 564.50 L802.17 564.98 L802.67 565.45 L803.17 566.40 L803.17 567.36 L802.67 568.31 L802.17 568.79 L800.68 569.26 L796.22 569.26 M799.69 569.26 L803.17 574.50 M809.12 564.50 L805.15 574.50 M809.12 564.50 L813.09 574.50 M806.64 571.17 L811.60 571.17 M814.58 564.50 L817.06 574.50 M819.54 564.50 L817.06 574.50 M819.54 564.50 L822.02 574.50 M824.50 564.50 L822.02 574.50 M827.48 564.50 L827.48 574.50 M827.48 564.50 L834.42 574.50 M834.42 564.50 L834.42 574.50 M846.33 564.50 L846.33 574.50 M846.33 564.50 L850.80 564.50 L852.28 564.98 L852.78 565.45 L853.28 566.40 L853.28 567.36 L852.78 568.31 L852.28 568.79 L850.80 569.26 M846.33 569.26 L850.80 569.26 L852.28 569.74 L852.78 570.21 L853.28 571.17 L853.28 572.60 L852.78 573.55 L852.28 574.02 L850.80 574.50 L846.33 574.50 M855.26 564.50 L859.23 569.26 L859.23 574.50 M863.20 564.50 L859.23 569.26" fill="none" stroke="#fff" stroke-width="1.0" stroke-linecap="square" stroke-linejoin="round" shape-rendering="crispEdges"/><path d="M304.80 663.93 L303.83 662.98 L302.37 662.50 L300.43 662.50 L298.97 662.98 L298.00 663.93 L298.00 664.88 L298.49 665.83 L298.97 666.31 L299.94 666.79 L302.86 667.74 L303.83 668.21 L304.31 668.69 L304.80 669.64 L304.80 671.07 L303.83 672.02 L302.37 672.50 L300.43 672.50 L298.97 672.02 L298.00 671.07 M314.99 664.88 L314.51 663.93 L313.54 662.98 L312.57 662.50 L310.62 662.50 L309.65 662.98 L308.68 663.93 L308.20 664.88 L307.71 666.31 L307.71 668.69 L308.20 670.12 L308.68 671.07 L309.65 672.02 L310.62 672.50 L312.57 672.50 L313.54 672.02 L314.51 671.07 L314.99 670.12 M320.82 662.50 L316.94 672.50 M320.82 662.50 L324.71 672.50 M318.39 669.17 L323.25 669.17 M327.13 662.50 L327.13 672.50 M327.13 672.50 L332.96 672.50 M335.39 662.50 L335.39 672.50 M335.39 662.50 L341.70 662.50 M335.39 667.26 L339.27 667.26 M335.39 672.50 L341.70 672.50" fill="none" stroke="#fff" stroke-width="1.0" stroke-linecap="square" stroke-linejoin="round" shape-rendering="crispEdges"/><path d="M494.10 662.50 L494.10 672.50 M494.10 662.50 L497.66 662.50 L499.19 662.98 L500.21 663.93 L500.71 664.88 L501.22 666.31 L501.22 668.69 L500.71 670.12 L500.21 671.07 L499.19 672.02 L497.66 672.50 L494.10 672.50 M507.33 662.50 L503.26 672.50 M507.33 662.50 L511.40 672.50 M504.79 669.17 L509.87 669.17 M515.98 662.50 L515.98 672.50 M512.42 662.50 L519.54 662.50 M522.09 662.50 L522.09 672.50 M522.09 662.50 L528.70 662.50 M522.09 667.26 L526.16 667.26 M522.09 672.50 L528.70 672.50" fill="none" stroke="#fff" stroke-width="1.0" stroke-linecap="square" stroke-linejoin="round" shape-rendering="crispEdges"/><path d="M688.80 662.50 L688.80 672.50 M688.80 662.50 L692.22 662.50 L693.68 662.98 L694.65 663.93 L695.14 664.88 L695.63 666.31 L695.63 668.69 L695.14 670.12 L694.65 671.07 L693.68 672.02 L692.22 672.50 L688.80 672.50 M699.05 662.50 L699.05 672.50 M699.05 662.50 L703.44 662.50 L704.90 662.98 L705.39 663.45 L705.88 664.40 L705.88 665.36 L705.39 666.31 L704.90 666.79 L703.44 667.26 L699.05 667.26 M702.46 667.26 L705.88 672.50 M716.12 664.88 L715.63 663.93 L714.66 662.98 L713.68 662.50 L711.73 662.50 L710.75 662.98 L709.78 663.93 L709.29 664.88 L708.80 666.31 L708.80 668.69 L709.29 670.12 L709.78 671.07 L710.75 672.02 L711.73 672.50 L713.68 672.50 L714.66 672.02 L715.63 671.07 L716.12 670.12 L716.12 668.69 M713.68 668.69 L716.12 668.69 M720.02 671.55 L719.54 672.02 L720.02 672.50 L720.51 672.02 L720.02 671.55 M732.22 662.50 L732.22 672.50 M732.22 662.50 L739.05 672.50 M739.05 662.50 L739.05 672.50 M744.91 665.83 L743.93 666.31 L742.95 667.26 L742.47 668.69 L742.47 669.64 L742.95 671.07 L743.93 672.02 L744.91 672.50 L746.37 672.50 L747.35 672.02 L748.32 671.07 L748.81 669.64 L748.81 668.69 L748.32 667.26 L747.35 666.31 L746.37 665.83 L744.91 665.83 M752.71 671.55 L752.22 672.02 L752.71 672.50 L753.20 672.02 L752.71 671.55" fill="none" stroke="#fff" stroke-width="1.0" stroke-linecap="square" stroke-linejoin="round" shape-rendering="crispEdges"/><path d="M885.20 662.50 L885.20 672.50 M885.20 662.50 L889.56 662.50 L891.02 662.98 L891.50 663.45 L891.99 664.40 L891.99 665.36 L891.50 666.31 L891.02 666.79 L889.56 667.26 L885.20 667.26 M888.59 667.26 L891.99 672.50 M894.89 668.69 L900.71 668.69 L900.71 667.74 L900.23 666.79 L899.74 666.31 L898.77 665.83 L897.32 665.83 L896.35 666.31 L895.38 667.26 L894.89 668.69 L894.89 669.64 L895.38 671.07 L896.35 672.02 L897.32 672.50 L898.77 672.50 L899.74 672.02 L900.71 671.07 M903.13 665.83 L906.04 672.50 M908.95 665.83 L906.04 672.50 M912.34 671.55 L911.86 672.02 L912.34 672.50 L912.83 672.02 L912.34 671.55 M924.46 662.50 L924.46 672.50 M924.46 662.50 L931.24 672.50 M931.24 662.50 L931.24 672.50 M937.06 665.83 L936.09 666.31 L935.12 667.26 L934.64 668.69 L934.64 669.64 L935.12 671.07 L936.09 672.02 L937.06 672.50 L938.51 672.50 L939.48 672.02 L940.45 671.07 L940.94 669.64 L940.94 668.69 L940.45 667.26 L939.48 666.31 L938.51 665.83 L937.06 665.83 M944.82 671.55 L944.33 672.02 L944.82 672.50 L945.30 672.02 L944.82 671.55" fill="none" stroke="#fff" stroke-width="1.0" stroke-linecap="square" stroke-linejoin="round" shape-rendering="crispEdges"/><path d="M654.20 400.50 L665.10 416.50 M665.10 400.50 L654.20 416.50 M669.77 400.50 L680.66 416.50 M680.66 400.50 L669.77 416.50 M685.34 400.50 L696.23 416.50 M696.23 400.50 L685.34 416.50 M700.90 400.50 L711.80 416.50 M711.80 400.50 L700.90 416.50" fill="none" stroke="#fff" stroke-width="1.0" stroke-dasharray="1.8 2.2" stroke-linecap="butt" stroke-linejoin="round" shape-rendering="crispEdges"/><path d="M654.20 497.50 L665.10 514.50 M665.10 497.50 L654.20 514.50 M669.77 497.50 L680.66 514.50 M680.66 497.50 L669.77 514.50 M685.34 497.50 L696.23 514.50 M696.23 497.50 L685.34 514.50 M700.90 497.50 L711.80 514.50 M711.80 497.50 L700.90 514.50" fill="none" stroke="#fff" stroke-width="1.0" stroke-linecap="square" stroke-linejoin="round" shape-rendering="crispEdges"/><path d="M654.20 531.50 L665.10 548.50 M665.10 531.50 L654.20 548.50 M669.77 531.50 L680.66 548.50 M680.66 531.50 L669.77 548.50 M685.34 531.50 L696.23 548.50 M696.23 531.50 L685.34 548.50 M700.90 531.50 L711.80 548.50 M711.80 531.50 L700.90 548.50" fill="none" stroke="#fff" stroke-width="1.0" stroke-linecap="square" stroke-linejoin="round" shape-rendering="crispEdges"/><path d="M507.50 600.50 L518.51 616.50 M518.51 600.50 L507.50 616.50 M523.23 600.50 L534.24 616.50 M534.24 600.50 L523.23 616.50 M538.96 600.50 L549.97 616.50 M549.97 600.50 L538.96 616.50 M554.69 600.50 L565.70 616.50 M565.70 600.50 L554.69 616.50" fill="none" stroke="#fff" stroke-width="1.0" stroke-linecap="square" stroke-linejoin="round" shape-rendering="crispEdges"/><path d="M899.20 600.50 L910.12 616.50 M910.12 600.50 L899.20 616.50 M914.79 600.50 L925.71 616.50 M925.71 600.50 L914.79 616.50 M930.39 600.50 L941.31 616.50 M941.31 600.50 L930.39 616.50 M945.98 600.50 L956.90 616.50 M956.90 600.50 L945.98 616.50" fill="none" stroke="#fff" stroke-width="1.0" stroke-linecap="square" stroke-linejoin="round" shape-rendering="crispEdges"/><path d="M352.30 708.50 L363.35 724.50 M363.35 708.50 L352.30 724.50 M368.08 708.50 L379.13 724.50 M379.13 708.50 L368.08 724.50 M383.87 708.50 L394.92 724.50 M394.92 708.50 L383.87 724.50 M399.65 708.50 L410.70 724.50 M410.70 708.50 L399.65 724.50" fill="none" stroke="#fff" stroke-width="1.0" stroke-linecap="square" stroke-linejoin="round" shape-rendering="crispEdges"/><path d="M548.40 708.50 L559.34 724.50 M559.34 708.50 L548.40 724.50 M564.02 708.50 L574.96 724.50 M574.96 708.50 L564.02 724.50 M579.64 708.50 L590.58 724.50 M590.58 708.50 L579.64 724.50 M595.26 708.50 L606.20 724.50 M606.20 708.50 L595.26 724.50" fill="none" stroke="#fff" stroke-width="1.0" stroke-linecap="square" stroke-linejoin="round" shape-rendering="crispEdges"/><path d="M743.50 708.50 L754.55 724.50 M754.55 708.50 L743.50 724.50 M759.28 708.50 L770.33 724.50 M770.33 708.50 L759.28 724.50 M775.07 708.50 L786.12 724.50 M786.12 708.50 L775.07 724.50 M790.85 708.50 L801.90 724.50 M801.90 708.50 L790.85 724.50" fill="none" stroke="#fff" stroke-width="1.0" stroke-linecap="square" stroke-linejoin="round" shape-rendering="crispEdges"/><path d="M939.50 708.50 L950.47 724.50 M950.47 708.50 L939.50 724.50 M955.18 708.50 L966.15 724.50 M966.15 708.50 L955.18 724.50 M970.85 708.50 L981.82 724.50 M981.82 708.50 L970.85 724.50 M986.53 708.50 L997.50 724.50 M997.50 708.50 L986.53 724.50" fill="none" stroke="#fff" stroke-width="1.0" stroke-linecap="square" stroke-linejoin="round" shape-rendering="crispEdges"/></svg>
<div style="left:1237px;top:165px;width:2px;height:986px;background:linear-gradient(90deg,#9a9a9a,#5e5e5e);"></div>
<div style="left:1234px;top:165px;width:1px;height:29px;background:#adadad;"></div>
<svg style="left:3px;top:1136px;" width="240" height="16" viewBox="0 0 240 16"><path d="M57.3 0 L62.4 11.6 Q63.8 14.6 67 14.6 H117.6 Q120.6 14.6 121.8 11.6 L127 0 Z" fill="#cdcdcd" stroke="#222" stroke-width="1"/><path d="M127 0 L132.4 11.6 Q133.8 14.6 137 14.6 H187.6 Q190.6 14.6 191.8 11.6 L197.6 0 Z" fill="#cdcdcd" stroke="#222" stroke-width="1"/><path d="M0.3 0 L2.8 10.6 Q4 14.6 7.6 14.6 H47.4 Q50.6 14.6 51.8 11.6 L57.3 0 Z" fill="#fff" stroke="#222" stroke-width="1"/><rect x="0.8" y="-0.5" width="56" height="1.2" fill="#fff"/><rect x="205.5" y="1.8" width="20" height="11" fill="#e4e4e4" stroke="#a8a8a8" stroke-width="1"/><path d="M211.5 7.3 H219.5 M215.5 3.4 V11.2" stroke="#555" stroke-width="1.2"/></svg>
<div style="left:15.5px;top:1139px;font-size:10.5px;line-height:10.5px;color:#000;white-space:pre;letter-spacing:0.739px;font-weight:700;">Model</div>
<div style="left:75.2px;top:1139px;font-size:10.5px;line-height:10.5px;color:#000;white-space:pre;letter-spacing:0.321px;">Layout1</div>
<div style="left:145.3px;top:1139px;font-size:10.5px;line-height:10.5px;color:#000;white-space:pre;letter-spacing:0.337px;">Layout2</div>
<div style="left:1251px;top:176px;width:348px;height:20px;background:#f0f0f0;border:1px solid #a8a8a8;"></div>
<div style="left:1252px;top:177px;width:331px;height:18px;background:#f0f0f0;border:1px solid #9dc3ee;"></div>
<div style="left:1582px;top:177px;width:16px;height:18px;background:#cccccc;border:1px solid #bcbcbc;"></div>
<svg style="left:1585px;top:183px;" width="10" height="6" viewBox="0 0 10 6"><path d="M1 1 L5 4.8 L9 1" fill="none" stroke="#a8a8a8" stroke-width="1.1"/></svg>
<div style="left:1253.5px;top:181px;font-size:12px;line-height:12px;color:#6d6d6d;white-space:pre;letter-spacing:-0.486px;">BlockAttributeDef (1)</div>
<div style="left:1252px;top:203px;width:25px;height:24px;background:#cdcdcd;border:1px solid #c4c4c4;"></div>
<div style="left:1285px;top:203px;width:25px;height:24px;background:#cdcdcd;border:1px solid #c4c4c4;"></div>
<div style="left:1318px;top:203px;width:25px;height:24px;background:#cdcdcd;border:1px solid #c4c4c4;"></div>
<div style="left:1351px;top:203px;width:25px;height:24px;background:#e3e3e3;border:1px solid #8e8e8e;"></div>
<div style="left:1384px;top:203px;width:25px;height:24px;background:#e3e3e3;border:1px solid #8e8e8e;"></div>
<svg style="left:1255px;top:206px;" width="19" height="18" viewBox="0 0 19 18"><circle cx="8" cy="10.4" r="4.6" fill="none" stroke="#dedede" stroke-width="1.3"/><path d="M8 3.4 Q14 3 15 8.4" fill="none" stroke="#dedede" stroke-width="1.3"/><path d="M12.6 7 L15.2 9.6 L17.6 6.4" fill="none" stroke="#dedede" stroke-width="1.3"/></svg>
<svg style="left:1288px;top:206px;" width="19" height="18" viewBox="0 0 19 18"><path d="M8.6 4.4 V15.2 L11.2 12.8 L13 16.8 L14.6 16 L12.8 12.2 L16.2 12 Z" fill="#d9d9d9" stroke="#dedede" stroke-width="1.1"/><path d="M2.4 4.4 L6.6 8 L2.4 11.6 Z" fill="#dedede"/><path d="M7.4 3 V12" stroke="#dedede" stroke-width="1"/></svg>
<svg style="left:1321px;top:206px;" width="19" height="18" viewBox="0 0 19 18"><rect x="2" y="2.4" width="14.6" height="12.6" fill="none" stroke="#dedede" stroke-width="1.2" stroke-dasharray="3.2 2.2"/><path d="M8.6 5.4 V16.2 L11.2 13.8 L13 17.8 L14.6 17 L12.8 13.2 L16.2 13 Z" fill="#d9d9d9" stroke="#dedede" stroke-width="1.1"/></svg>
<svg style="left:1354px;top:205px;" width="21" height="21" viewBox="0 0 21 21"><path d="M1 2.6 H3.6 M5.6 2.6 H15 M1 6.6 H3.6 M5.6 6.6 H15 M1 10.6 H3.6 M5.6 10.6 H10.4" stroke="#1583dd" stroke-width="1.3"/><path d="M13 9.4 L18.6 9.4 L16 13.4 L19 13.4 L11.6 20 L13.8 15 L11 15 Z" fill="#f8c400" stroke="#2b2100" stroke-width="0.8"/></svg>
<div style="left:1391.6px;top:207px;font-size:19px;line-height:19px;color:#111;white-space:pre;font-weight:700;">?</div>
<div style="left:1251px;top:234px;width:348px;height:906px;background:#f0f0f0;border:1px solid #b4b4b4;"></div>
<svg style="left:1585px;top:241px;" width="10" height="6" viewBox="0 0 10 6"><path d="M0 5.2 H9.4 L4.7 0.2 Z" fill="#8a8a8a"/></svg>
<svg style="left:1585px;top:1129px;" width="10" height="6" viewBox="0 0 10 6"><path d="M0 0.2 H9.4 L4.7 5.2 Z" fill="#8a8a8a"/></svg>
<div style="left:1261px;top:265px;width:310px;height:209px;border:1px solid #dadada;border-top:none;"></div>
<div style="left:1261px;top:501px;width:310px;height:321px;border:1px solid #dadada;border-top:none;"></div>
<div style="left:1261px;top:849px;width:310px;height:77px;border:1px solid #dadada;border-top:none;"></div>
<div style="left:1261px;top:953px;width:310px;height:187px;border:1px solid #dadada;border-top:none;border-bottom:none;"></div>
<div style="left:1262px;top:245px;width:309px;height:20px;background:#e0e4fb;border:1px solid #b4b4b4;"></div>
<div style="left:1267px;top:250px;font-size:12px;line-height:12px;color:#727272;white-space:pre;letter-spacing:-0.201px;font-weight:700;">General</div>
<svg style="left:1556px;top:251px;" width="10" height="6" viewBox="0 0 10 6"><path d="M0 5.4 H9.6 L4.8 0.2 Z" fill="#9a9a9a"/></svg>
<div style="left:1301px;top:278px;width:270px;height:20px;background:#b1ceec;border:1px solid #a2a8b2;box-shadow:0 0 0 1px #f6f6f6;"></div>
<div style="left:1301px;top:300px;width:270px;height:20px;background:#f0f0f0;border:1px solid #a4a4a4;box-shadow:0 0 0 1px #f6f6f6;"></div>
<div style="left:1302px;top:301px;width:253px;height:18px;background:#f0f0f0;border:1px solid #9dc3ee;"></div>
<div style="left:1554px;top:301px;width:16px;height:18px;background:#cccccc;border:1px solid #bcbcbc;"></div>
<svg style="left:1557px;top:307.0px;" width="10" height="6" viewBox="0 0 10 6"><path d="M1 1 L5 4.8 L9 1" fill="none" stroke="#a8a8a8" stroke-width="1.1"/></svg>
<div style="left:1303.5px;top:306px;font-size:10.5px;line-height:10.5px;color:#6d6d6d;white-space:pre;letter-spacing:0.348px;">TitleText</div>
<div style="left:1301px;top:322px;width:270px;height:20px;background:#f0f0f0;border:1px solid #a4a4a4;box-shadow:0 0 0 1px #f6f6f6;"></div>
<div style="left:1302px;top:323px;width:253px;height:18px;background:#f0f0f0;border:1px solid #9dc3ee;"></div>
<div style="left:1554px;top:323px;width:16px;height:18px;background:#cccccc;border:1px solid #bcbcbc;"></div>
<svg style="left:1557px;top:329.0px;" width="10" height="6" viewBox="0 0 10 6"><path d="M1 1 L5 4.8 L9 1" fill="none" stroke="#a8a8a8" stroke-width="1.1"/></svg>
<svg style="left:1306px;top:326px;" width="11" height="11" viewBox="0 0 11 11"><circle cx="5.5" cy="5.5" r="4.6" fill="#fff" stroke="#7a7a7a" stroke-width="1"/></svg>
<div style="left:1323px;top:328px;font-size:10.5px;line-height:10.5px;color:#6d6d6d;white-space:pre;letter-spacing:-0.005px;">ByLayer</div>
<div style="left:1301px;top:344px;width:270px;height:20px;background:#b1ceec;border:1px solid #a2a8b2;box-shadow:0 0 0 1px #f6f6f6;"></div>
<div style="left:1303.5px;top:350px;font-size:10.5px;line-height:10.5px;color:#000;white-space:pre;">1</div>
<div style="left:1301px;top:366px;width:270px;height:20px;background:#f0f0f0;border:1px solid #a4a4a4;box-shadow:0 0 0 1px #f6f6f6;"></div>
<div style="left:1302px;top:367px;width:253px;height:18px;background:#f0f0f0;border:1px solid #9dc3ee;"></div>
<div style="left:1554px;top:367px;width:16px;height:18px;background:#cccccc;border:1px solid #bcbcbc;"></div>
<svg style="left:1557px;top:373.0px;" width="10" height="6" viewBox="0 0 10 6"><path d="M1 1 L5 4.8 L9 1" fill="none" stroke="#a8a8a8" stroke-width="1.1"/></svg>
<div style="left:1303.5px;top:372px;font-size:10.5px;line-height:10.5px;color:#6d6d6d;white-space:pre;letter-spacing:-0.005px;">ByLayer</div>
<div style="left:1357.5px;top:372px;font-size:10.5px;line-height:10.5px;color:#6d6d6d;white-space:pre;letter-spacing:-0.181px;">Solid line</div>
<div style="left:1301px;top:388px;width:270px;height:20px;background:#f0f0f0;border:1px solid #a4a4a4;box-shadow:0 0 0 1px #f6f6f6;"></div>
<div style="left:1302px;top:389px;width:253px;height:18px;background:#f0f0f0;border:1px solid #9dc3ee;"></div>
<div style="left:1554px;top:389px;width:16px;height:18px;background:#cccccc;border:1px solid #bcbcbc;"></div>
<svg style="left:1557px;top:395.0px;" width="10" height="6" viewBox="0 0 10 6"><path d="M1 1 L5 4.8 L9 1" fill="none" stroke="#a8a8a8" stroke-width="1.1"/></svg>
<div style="left:1305px;top:398px;width:32px;height:1px;background:#555;"></div>
<div style="left:1339px;top:394px;font-size:10.5px;line-height:10.5px;color:#6d6d6d;white-space:pre;letter-spacing:-0.005px;">ByLayer</div>
<div style="left:1301px;top:410px;width:270px;height:20px;background:#b1ceec;border:1px solid #a2a8b2;box-shadow:0 0 0 1px #f6f6f6;"></div>
<div style="left:1303.5px;top:416px;font-size:10.5px;line-height:10.5px;color:#000;white-space:pre;">0</div>
<div style="left:1301px;top:432px;width:270px;height:20px;background:#b1ceec;border:1px solid #a2a8b2;box-shadow:0 0 0 1px #f6f6f6;"></div>
<div style="left:1303.5px;top:438px;font-size:10.5px;line-height:10.5px;color:#000;white-space:pre;letter-spacing:-0.005px;">ByLayer</div>
<div style="left:1301px;top:454px;width:270px;height:20px;background:#f0f0f0;border:1px solid #a4a4a4;box-shadow:0 0 0 1px #f6f6f6;"></div>
<div style="left:1302px;top:455px;width:253px;height:18px;background:#f0f0f0;border:1px solid #9dc3ee;"></div>
<div style="left:1554px;top:455px;width:16px;height:18px;background:#cccccc;border:1px solid #bcbcbc;"></div>
<svg style="left:1557px;top:461.0px;" width="10" height="6" viewBox="0 0 10 6"><path d="M1 1 L5 4.8 L9 1" fill="none" stroke="#a8a8a8" stroke-width="1.1"/></svg>
<div style="left:1303.5px;top:460px;font-size:10.5px;line-height:10.5px;color:#6d6d6d;white-space:pre;letter-spacing:-0.143px;">ByColor</div>
<div style="left:1262px;top:481px;width:309px;height:20px;background:#e0e4fb;border:1px solid #b4b4b4;"></div>
<div style="left:1267px;top:486px;font-size:12px;line-height:12px;color:#727272;white-space:pre;letter-spacing:0.568px;font-weight:700;">Text</div>
<svg style="left:1556px;top:487px;" width="10" height="6" viewBox="0 0 10 6"><path d="M0 5.4 H9.6 L4.8 0.2 Z" fill="#9a9a9a"/></svg>
<div style="left:1301px;top:514px;width:270px;height:20px;background:#b1ceec;border:1px solid #a2a8b2;box-shadow:0 0 0 1px #f6f6f6;"></div>
<div style="left:1303.5px;top:520px;font-size:10.5px;line-height:10.5px;color:#000;white-space:pre;">0</div>
<div style="left:1301px;top:536px;width:270px;height:20px;background:#f0f0f0;border:1px solid #a4a4a4;box-shadow:0 0 0 1px #f6f6f6;"></div>
<div style="left:1302px;top:537px;width:253px;height:18px;background:#f0f0f0;border:1px solid #9dc3ee;"></div>
<div style="left:1554px;top:537px;width:16px;height:18px;background:#cccccc;border:1px solid #bcbcbc;"></div>
<svg style="left:1557px;top:543.0px;" width="10" height="6" viewBox="0 0 10 6"><path d="M1 1 L5 4.8 L9 1" fill="none" stroke="#a8a8a8" stroke-width="1.1"/></svg>
<div style="left:1303.5px;top:542px;font-size:10.5px;line-height:10.5px;color:#6d6d6d;white-space:pre;letter-spacing:-0.438px;">No</div>
<div style="left:1301px;top:558px;width:270px;height:20px;background:#b1ceec;border:1px solid #a2a8b2;box-shadow:0 0 0 1px #f6f6f6;"></div>
<div style="left:1303.5px;top:564px;font-size:10.5px;line-height:10.5px;color:#000;white-space:pre;letter-spacing:0.013px;">Enter Client Name</div>
<div style="left:1301px;top:580px;width:270px;height:20px;background:#b1ceec;border:1px solid #a2a8b2;box-shadow:0 0 0 1px #f6f6f6;"></div>
<div style="left:1303.5px;top:586px;font-size:10.5px;line-height:10.5px;color:#000;white-space:pre;letter-spacing:0.445px;">2.5</div>
<div style="left:1301px;top:602px;width:270px;height:20px;background:#f0f0f0;border:1px solid #a4a4a4;box-shadow:0 0 0 1px #f6f6f6;"></div>
<div style="left:1302px;top:603px;width:253px;height:18px;background:#f0f0f0;border:1px solid #9dc3ee;"></div>
<div style="left:1554px;top:603px;width:16px;height:18px;background:#cccccc;border:1px solid #bcbcbc;"></div>
<svg style="left:1557px;top:609.0px;" width="10" height="6" viewBox="0 0 10 6"><path d="M1 1 L5 4.8 L9 1" fill="none" stroke="#a8a8a8" stroke-width="1.1"/></svg>
<div style="left:1303.5px;top:608px;font-size:10.5px;line-height:10.5px;color:#6d6d6d;white-space:pre;letter-spacing:0.010px;">Middle Center</div>
<div style="left:1301px;top:624px;width:270px;height:20px;background:#b1ceec;border:1px solid #a2a8b2;box-shadow:0 0 0 1px #f6f6f6;"></div>
<div style="left:1303.5px;top:630px;font-size:10.5px;line-height:10.5px;color:#000;white-space:pre;letter-spacing:-1.339px;">XXXX</div>
<div style="left:1301px;top:646px;width:270px;height:20px;background:#b1ceec;border:1px solid #a2a8b2;box-shadow:0 0 0 1px #f6f6f6;"></div>
<div style="left:1303.5px;top:652px;font-size:10.5px;line-height:10.5px;color:#000;white-space:pre;">0</div>
<div style="left:1301px;top:668px;width:270px;height:20px;background:#b1ceec;border:1px solid #a2a8b2;box-shadow:0 0 0 1px #f6f6f6;"></div>
<div style="left:1303.5px;top:674px;font-size:10.5px;line-height:10.5px;color:#000;white-space:pre;">1</div>
<div style="left:1301px;top:690px;width:270px;height:20px;background:#b1ceec;border:1px solid #a2a8b2;box-shadow:0 0 0 1px #f6f6f6;"></div>
<div style="left:1303.5px;top:696px;font-size:10.5px;line-height:10.5px;color:#000;white-space:pre;letter-spacing:0.315px;">760.9987</div>
<div style="left:1301px;top:712px;width:270px;height:20px;background:#b1ceec;border:1px solid #a2a8b2;box-shadow:0 0 0 1px #f6f6f6;"></div>
<div style="left:1303.5px;top:718px;font-size:10.5px;line-height:10.5px;color:#000;white-space:pre;letter-spacing:0.255px;">73.2256</div>
<div style="left:1301px;top:734px;width:270px;height:20px;background:#b1ceec;border:1px solid #a2a8b2;box-shadow:0 0 0 1px #f6f6f6;"></div>
<div style="left:1303.5px;top:740px;font-size:10.5px;line-height:10.5px;color:#000;white-space:pre;">0</div>
<div style="left:1301px;top:756px;width:270px;height:22px;background:#f0f0f0;border:1px solid #a4a4a4;box-shadow:0 0 0 1px #f6f6f6;"></div>
<div style="left:1302px;top:757px;width:253px;height:20px;background:#f0f0f0;border:1px solid #9dc3ee;"></div>
<div style="left:1554px;top:757px;width:16px;height:20px;background:#cccccc;border:1px solid #bcbcbc;"></div>
<svg style="left:1557px;top:764.0px;" width="10" height="6" viewBox="0 0 10 6"><path d="M1 1 L5 4.8 L9 1" fill="none" stroke="#a8a8a8" stroke-width="1.1"/></svg>
<svg style="left:1306px;top:760px;" width="14" height="13" viewBox="0 0 14 13"><path d="M1 11.5 L5 1.5 L9 11.5 M2.6 8 H7.4" fill="none" stroke="#cfcfcf" stroke-width="1.1"/><circle cx="10" cy="9.6" r="2.6" fill="none" stroke="#cfcfcf" stroke-width="1"/><path d="M8.2 11.4 L11.8 7.8" stroke="#cfcfcf" stroke-width="1"/></svg>
<div style="left:1323.5px;top:763px;font-size:10.5px;line-height:10.5px;color:#6d6d6d;white-space:pre;letter-spacing:0.125px;">Standard</div>
<div style="left:1301px;top:780px;width:270px;height:20px;background:#b1ceec;border:1px solid #a2a8b2;box-shadow:0 0 0 1px #f6f6f6;"></div>
<div style="left:1303.5px;top:786px;font-size:10.5px;line-height:10.5px;color:#000;white-space:pre;letter-spacing:0.128px;">Client</div>
<div style="left:1301px;top:802px;width:270px;height:20px;background:#b1ceec;border:1px solid #a2a8b2;box-shadow:0 0 0 1px #f6f6f6;"></div>
<div style="left:1303.5px;top:808px;font-size:10.5px;line-height:10.5px;color:#000;white-space:pre;">0</div>
<div style="left:1262px;top:829px;width:309px;height:20px;background:#e0e4fb;border:1px solid #b4b4b4;"></div>
<div style="left:1267px;top:834px;font-size:12px;line-height:12px;color:#727272;white-space:pre;letter-spacing:0.067px;font-weight:700;">Geometry</div>
<svg style="left:1556px;top:835px;" width="10" height="6" viewBox="0 0 10 6"><path d="M0 5.4 H9.6 L4.8 0.2 Z" fill="#9a9a9a"/></svg>
<div style="left:1301px;top:862px;width:270px;height:20px;background:#b1ceec;border:1px solid #a2a8b2;box-shadow:0 0 0 1px #f6f6f6;"></div>
<div style="left:1303.5px;top:868px;font-size:10.5px;line-height:10.5px;color:#000;white-space:pre;letter-spacing:0.315px;">756.5987</div>
<div style="left:1301px;top:884px;width:270px;height:20px;background:#b1ceec;border:1px solid #a2a8b2;box-shadow:0 0 0 1px #f6f6f6;"></div>
<div style="left:1303.5px;top:890px;font-size:10.5px;line-height:10.5px;color:#000;white-space:pre;letter-spacing:0.255px;">71.9756</div>
<div style="left:1301px;top:906px;width:270px;height:20px;background:#b1ceec;border:1px solid #a2a8b2;box-shadow:0 0 0 1px #f6f6f6;"></div>
<div style="left:1303.5px;top:912px;font-size:10.5px;line-height:10.5px;color:#000;white-space:pre;">0</div>
<div style="left:1262px;top:933px;width:309px;height:20px;background:#e0e4fb;border:1px solid #b4b4b4;"></div>
<div style="left:1267px;top:938px;font-size:12px;line-height:12px;color:#727272;white-space:pre;letter-spacing:-0.896px;font-weight:700;">Misc</div>
<svg style="left:1556px;top:939px;" width="10" height="6" viewBox="0 0 10 6"><path d="M0 5.4 H9.6 L4.8 0.2 Z" fill="#9a9a9a"/></svg>
<div style="left:1301px;top:966px;width:270px;height:20px;background:#f0f0f0;border:1px solid #a4a4a4;box-shadow:0 0 0 1px #f6f6f6;"></div>
<div style="left:1302px;top:967px;width:253px;height:18px;background:#f0f0f0;border:1px solid #9dc3ee;"></div>
<div style="left:1554px;top:967px;width:16px;height:18px;background:#cccccc;border:1px solid #bcbcbc;"></div>
<svg style="left:1557px;top:973.0px;" width="10" height="6" viewBox="0 0 10 6"><path d="M1 1 L5 4.8 L9 1" fill="none" stroke="#a8a8a8" stroke-width="1.1"/></svg>
<div style="left:1303.5px;top:972px;font-size:10.5px;line-height:10.5px;color:#6d6d6d;white-space:pre;letter-spacing:-0.438px;">No</div>
<div style="left:1301px;top:988px;width:270px;height:20px;background:#f0f0f0;border:1px solid #a4a4a4;box-shadow:0 0 0 1px #f6f6f6;"></div>
<div style="left:1302px;top:989px;width:253px;height:18px;background:#f0f0f0;border:1px solid #9dc3ee;"></div>
<div style="left:1554px;top:989px;width:16px;height:18px;background:#cccccc;border:1px solid #bcbcbc;"></div>
<svg style="left:1557px;top:995.0px;" width="10" height="6" viewBox="0 0 10 6"><path d="M1 1 L5 4.8 L9 1" fill="none" stroke="#a8a8a8" stroke-width="1.1"/></svg>
<div style="left:1303.5px;top:994px;font-size:10.5px;line-height:10.5px;color:#6d6d6d;white-space:pre;letter-spacing:-0.438px;">No</div>
<div style="left:1301px;top:1010px;width:270px;height:20px;background:#f0f0f0;border:1px solid #a4a4a4;box-shadow:0 0 0 1px #f6f6f6;"></div>
<div style="left:1302px;top:1011px;width:253px;height:18px;background:#f0f0f0;border:1px solid #9dc3ee;"></div>
<div style="left:1554px;top:1011px;width:16px;height:18px;background:#cccccc;border:1px solid #bcbcbc;"></div>
<svg style="left:1557px;top:1017.0px;" width="10" height="6" viewBox="0 0 10 6"><path d="M1 1 L5 4.8 L9 1" fill="none" stroke="#a8a8a8" stroke-width="1.1"/></svg>
<div style="left:1303.5px;top:1016px;font-size:10.5px;line-height:10.5px;color:#6d6d6d;white-space:pre;letter-spacing:-0.438px;">No</div>
<div style="left:1301px;top:1032px;width:270px;height:20px;background:#f0f0f0;border:1px solid #a4a4a4;box-shadow:0 0 0 1px #f6f6f6;"></div>
<div style="left:1302px;top:1033px;width:253px;height:18px;background:#f0f0f0;border:1px solid #9dc3ee;"></div>
<div style="left:1554px;top:1033px;width:16px;height:18px;background:#cccccc;border:1px solid #bcbcbc;"></div>
<svg style="left:1557px;top:1039.0px;" width="10" height="6" viewBox="0 0 10 6"><path d="M1 1 L5 4.8 L9 1" fill="none" stroke="#a8a8a8" stroke-width="1.1"/></svg>
<div style="left:1303.5px;top:1038px;font-size:10.5px;line-height:10.5px;color:#6d6d6d;white-space:pre;letter-spacing:-0.438px;">No</div>
<div style="left:1301px;top:1054px;width:270px;height:20px;background:#f0f0f0;border:1px solid #a4a4a4;box-shadow:0 0 0 1px #f6f6f6;"></div>
<div style="left:1302px;top:1055px;width:253px;height:18px;background:#f0f0f0;border:1px solid #9dc3ee;"></div>
<div style="left:1554px;top:1055px;width:16px;height:18px;background:#cccccc;border:1px solid #bcbcbc;"></div>
<svg style="left:1557px;top:1061.0px;" width="10" height="6" viewBox="0 0 10 6"><path d="M1 1 L5 4.8 L9 1" fill="none" stroke="#a8a8a8" stroke-width="1.1"/></svg>
<div style="left:1303.5px;top:1060px;font-size:10.5px;line-height:10.5px;color:#6d6d6d;white-space:pre;letter-spacing:-0.438px;">No</div>
<div style="left:1301px;top:1076px;width:270px;height:20px;background:#f0f0f0;border:1px solid #a4a4a4;box-shadow:0 0 0 1px #f6f6f6;"></div>
<div style="left:1302px;top:1077px;width:253px;height:18px;background:#f0f0f0;border:1px solid #9dc3ee;"></div>
<div style="left:1554px;top:1077px;width:16px;height:18px;background:#cccccc;border:1px solid #bcbcbc;"></div>
<svg style="left:1557px;top:1083.0px;" width="10" height="6" viewBox="0 0 10 6"><path d="M1 1 L5 4.8 L9 1" fill="none" stroke="#a8a8a8" stroke-width="1.1"/></svg>
<div style="left:1303.5px;top:1082px;font-size:10.5px;line-height:10.5px;color:#6d6d6d;white-space:pre;letter-spacing:-0.438px;">No</div>
<div style="left:1301px;top:1098px;width:270px;height:20px;background:#f0f0f0;border:1px solid #a4a4a4;box-shadow:0 0 0 1px #f6f6f6;"></div>
<div style="left:1302px;top:1099px;width:253px;height:18px;background:#f0f0f0;border:1px solid #9dc3ee;"></div>
<div style="left:1554px;top:1099px;width:16px;height:18px;background:#cccccc;border:1px solid #bcbcbc;"></div>
<svg style="left:1557px;top:1105.0px;" width="10" height="6" viewBox="0 0 10 6"><path d="M1 1 L5 4.8 L9 1" fill="none" stroke="#a8a8a8" stroke-width="1.1"/></svg>
<div style="left:1303.5px;top:1104px;font-size:10.5px;line-height:10.5px;color:#6d6d6d;white-space:pre;letter-spacing:-0.438px;">No</div>
<div style="left:1301px;top:1120px;width:270px;height:19px;background:#f0f0f0;border:1px solid #a4a4a4;box-shadow:0 0 0 1px #f6f6f6;"></div>
<div style="left:1302px;top:1121px;width:253px;height:17px;background:#f0f0f0;border:1px solid #9dc3ee;"></div>
<div style="left:1554px;top:1121px;width:16px;height:17px;background:#cccccc;border:1px solid #bcbcbc;"></div>
<svg style="left:1557px;top:1126.5px;" width="10" height="6" viewBox="0 0 10 6"><path d="M1 1 L5 4.8 L9 1" fill="none" stroke="#a8a8a8" stroke-width="1.1"/></svg>
<div style="left:1303.5px;top:1126px;font-size:10.5px;line-height:10.5px;color:#6d6d6d;white-space:pre;letter-spacing:-0.438px;">No</div>
<div style="left:1610px;top:165px;width:24px;height:986px;background:#c0c0c0;border:1px solid #8c8c8c;"></div>
<svg style="left:1616px;top:171px;" width="10" height="10" viewBox="0 0 10 10"><path d="M1 1.2 L8.8 8.8 M8.8 1.2 L1 8.8" stroke="#111" stroke-width="1.5"/></svg>
<svg style="left:1616px;top:194px;" width="12" height="15" viewBox="0 0 12 15"><path d="M2.4 0.8 H9.2 V2.4 H8.2 V6.4 Q10.6 7.4 10.6 9.4 H1 Q1 7.4 3.4 6.4 V2.4 H2.4 Z" fill="#222"/><path d="M5.8 9.4 V14" stroke="#222" stroke-width="1.2"/></svg>
<div style="left:1634px;top:165px;width:21px;height:74px;background:#fff;"></div>
<div style="left:1634px;top:239px;width:18px;height:75px;background:#f0f0f0;border:1px solid #dcdcdc;border-left:none;"></div>
<div style="left:1634px;top:314px;width:18px;height:108px;background:#f0f0f0;border:1px solid #dcdcdc;border-left:none;border-top:none;"></div>
<div style="left:1648px;top:227px;font-size:10.5px;line-height:10.5px;color:#000;white-space:pre;letter-spacing:0.127px;transform-origin:0 0;transform:rotate(-90deg) translateY(-9px);">Properties</div>
<div style="left:1648px;top:304px;font-size:10.5px;line-height:10.5px;color:#000;white-space:pre;letter-spacing:-0.237px;transform-origin:0 0;transform:rotate(-90deg) translateY(-9px);">HomeByMe</div>
<div style="left:1648px;top:413px;font-size:10.5px;line-height:10.5px;color:#000;white-space:pre;letter-spacing:0.057px;transform-origin:0 0;transform:rotate(-90deg) translateY(-9px);">G-code Generator</div>
<div style="left:1626px;top:1124px;font-size:11.5px;line-height:11.5px;color:#000;white-space:pre;letter-spacing:0.290px;transform-origin:0 0;transform:rotate(-90deg) translateY(-9px);font-weight:700;">Properties</div>
<svg style="left:1615px;top:1134px;" width="13" height="13" viewBox="0 0 13 13"><rect x="0.4" y="0.6" width="2.8" height="3" fill="#f5a800"/><rect x="4.8" y="0.6" width="2.8" height="3" fill="#d8262c"/><rect x="9.2" y="0.6" width="2.8" height="3" fill="#2ea43a"/><path d="M0.4 6.4 H6 M0.4 9.4 H6" stroke="#6a7f94" stroke-width="1" stroke-dasharray="1.6 0.8"/><path d="M8 12 V7.4 Q8 6 9.6 6 Q11.2 6 11.2 7.4 V12 M8 9.6 H11.2" fill="none" stroke="#222" stroke-width="1"/></svg>
<svg style="left:1272px;top:279px;" width="18" height="18" viewBox="0 0 18 18"><g transform="rotate(-32 9 9)" fill="none" stroke="#9b9b9b" stroke-width="1.1"><rect x="1.6" y="6.4" width="8.4" height="5.2" rx="2.6"/><rect x="8" y="6.4" width="8.4" height="5.2" rx="2.6"/></g></svg>
<svg style="left:1272px;top:301px;" width="18" height="18" viewBox="0 0 18 18"><path d="M9 2.2 L16 5.6 L9 9 L2 5.6 Z" fill="#dcdcdc" stroke="#7d7d7d" stroke-width="1"/><path d="M2 8.6 L9 12 L16 8.6 M2 11.6 L9 15 L16 11.6" fill="none" stroke="#7d7d7d" stroke-width="1.1"/></svg>
<svg style="left:1272px;top:323px;" width="18" height="18" viewBox="0 0 18 18"><path d="M7.4 3 L13.4 9 L7.8 14.6 L1.8 8.6 Z" fill="#7d7d7d"/><path d="M13 8.6 Q16.4 9.6 16 13 Q15.6 15 13.8 14.8 Q12 14.4 12.4 12 Z" fill="#7d7d7d"/><circle cx="7.4" cy="7.4" r="1.3" fill="#f0f0f0"/><path d="M4.6 1.8 L8 5.4" stroke="#7d7d7d" stroke-width="1"/></svg>
<svg style="left:1272px;top:345px;" width="18" height="18" viewBox="0 0 18 18"><path d="M1.6 3.6 H16.4" stroke="#7d7d7d" stroke-width="1" stroke-dasharray="5 4.6"/><path d="M1.6 8 H16.4" stroke="#9b9b9b" stroke-width="1.6" stroke-dasharray="3 2.4"/><path d="M1.6 12.2 H16.4" stroke="#7d7d7d" stroke-width="1" stroke-dasharray="1.4 1.4 2.6 1.4"/><path d="M1.6 16 H16.4" stroke="#7d7d7d" stroke-width="1" stroke-dasharray="1 1.2"/></svg>
<svg style="left:1272px;top:367px;" width="18" height="18" viewBox="0 0 18 18"><path d="M1.6 3.4 H16.4" stroke="#7d7d7d" stroke-width="1"/><path d="M1.6 8 H16.4" stroke="#9b9b9b" stroke-width="1.8" stroke-dasharray="3.6 1.4"/><path d="M1.6 12.2 H16.4" stroke="#9b9b9b" stroke-width="1.4" stroke-dasharray="2.4 1 1 1"/><path d="M1.6 16.2 H16.4" stroke="#7d7d7d" stroke-width="1" stroke-dasharray="6.6 1.6"/></svg>
<svg style="left:1272px;top:389px;" width="18" height="18" viewBox="0 0 18 18"><rect x="2.4" y="2.6" width="13.2" height="3.6" fill="#7d7d7d"/><rect x="2.4" y="7.8" width="13.2" height="2.6" fill="#7d7d7d"/><rect x="2.4" y="12" width="13.2" height="1.6" fill="#7d7d7d"/><rect x="2.4" y="15.2" width="13.2" height="0.9" fill="#7d7d7d"/></svg>
<svg style="left:1272px;top:411px;" width="18" height="18" viewBox="0 0 18 18"><path d="M2 3.4 H8 M5 3.4 V14.6 M2 14.6 H8" fill="none" stroke="#7d7d7d" stroke-width="1"/><text x='9.4' y='12.8' font-size='10.5' fill='#7d7d7d' font-weight='700' text-anchor='start' font-family='Liberation Sans' >D</text></svg>
<svg style="left:1272px;top:433px;" width="18" height="18" viewBox="0 0 18 18"><rect x="1.6" y="1.6" width="5" height="5" fill="#c9c9c9"/><rect x="1.6" y="6.6" width="5" height="5" fill="#f7f7f7"/><rect x="1.6" y="11.6" width="5" height="5" fill="#c9c9c9"/><rect x="6.6" y="1.6" width="5" height="5" fill="#f7f7f7"/><rect x="6.6" y="6.6" width="5" height="5" fill="#c9c9c9"/><rect x="6.6" y="11.6" width="5" height="5" fill="#f7f7f7"/><rect x="11.6" y="1.6" width="5" height="5" fill="#c9c9c9"/><rect x="11.6" y="6.6" width="5" height="5" fill="#f7f7f7"/><rect x="11.6" y="11.6" width="5" height="5" fill="#c9c9c9"/></svg>
<svg style="left:1272px;top:455px;" width="18" height="18" viewBox="0 0 18 18"><rect x="2.4" y="2.4" width="3.6" height="13.2" fill="#9b9b9b"/><rect x="7.4" y="2.4" width="3.6" height="13.2" fill="#9b9b9b"/><path d="M12.6 6 L16 2.6 M12.6 9.4 L16 6 M12.6 12.8 L16 9.4 M12.6 16 L16 12.6" stroke="#9b9b9b" stroke-width="1.1"/></svg>
<svg style="left:1272px;top:515px;" width="18" height="18" viewBox="0 0 18 18"><text x='9' y='10.4' font-size='11' fill='#7d7d7d' font-weight='400' text-anchor='middle' font-family='Liberation Sans' font-style='italic'>A</text><path d="M4.4 14.6 H13.6 M6 13.2 L4.4 14.6 L6 16 M12 13.2 L13.6 14.6 L12 16" fill="none" stroke="#9b9b9b" stroke-width="0.9"/></svg>
<svg style="left:1272px;top:537px;" width="18" height="18" viewBox="0 0 18 18"><text x='9' y='15.4' font-size='17' fill='#6a6a6a' font-weight='400' text-anchor='middle' font-family='Liberation Sans' >A</text></svg>
<svg style="left:1272px;top:559px;" width="18" height="18" viewBox="0 0 18 18"><rect x="0.4" y="2" width="17.4" height="14" rx="0.8" fill="#5e5e5e"/><path d="M3.4 5.6 L7.2 8.8 L3.4 12" fill="none" stroke="#fff" stroke-width="1.5"/><path d="M8.4 12.4 H13.4" stroke="#fff" stroke-width="1.5"/></svg>
<svg style="left:1272px;top:581px;" width="18" height="18" viewBox="0 0 18 18"><text x='1.4' y='13.4' font-size='11.5' fill='#6a6a6a' font-weight='700' text-anchor='start' font-family='Liberation Sans' >A</text><path d="M13.6 4 V14.6 M12 5.6 L13.6 3.8 L15.2 5.6 M12 13 L13.6 14.8 L15.2 13" fill="none" stroke="#9b9b9b" stroke-width="1"/></svg>
<svg style="left:1272px;top:603px;" width="18" height="18" viewBox="0 0 18 18"><text x='0.4' y='13.6' font-size='11.5' fill='#6a6a6a' font-weight='700' text-anchor='start' font-family='Liberation Sans' >A</text><path d="M9.6 5 H17 M9.6 7.8 H17 M9.6 10.6 H17 M9.6 13.4 H17" stroke="#9b9b9b" stroke-width="1"/></svg>
<svg style="left:1272px;top:625px;" width="18" height="18" viewBox="0 0 18 18"><text x='0' y='17' font-size='15' fill='#6a6a6a' font-weight='700' text-anchor='start' font-family='Liberation Sans' >A</text><path d="M9.4 2.4 L12 0.6 L16.8 5.4 L13.4 8.6 L9.4 4.6 Z" fill="#f4f4f4" stroke="#b4b4b4" stroke-width="0.9"/><path d="M11 3.6 L14.6 7.2 M12.4 2.4 L15.8 5.8" stroke="#c4c4c4" stroke-width="0.7"/></svg>
<svg style="left:1272px;top:647px;" width="18" height="18" viewBox="0 0 18 18"><circle cx="8.6" cy="9.6" r="6.8" fill="none" stroke="#a8a8a8" stroke-width="1" stroke-dasharray="9 2.6 2 2.6"/><path d="M11.4 2 L14.4 3.4 L12.2 5.6" fill="none" stroke="#9b9b9b" stroke-width="1"/><g transform="rotate(-22 8.6 10)"><text x='8.6' y='13.6' font-size='10.5' fill='#6a6a6a' font-weight='700' text-anchor='middle' font-family='Liberation Sans' >A</text></g></svg>
<svg style="left:1272px;top:669px;" width="18" height="18" viewBox="0 0 18 18"><text x='-0.6' y='16.4' font-size='8.5' fill='#6a6a6a' font-weight='700' text-anchor='start' font-family='Liberation Sans' letter-spacing='-0.6'>AB</text><path d="M11 1.6 V15.6 M14.2 1.6 V12" stroke="#9b9b9b" stroke-width="1"/><path d="M8 3.2 L10 4.6 L8 6 M17.4 3.2 L15.4 4.6 L17.4 6" fill="none" stroke="#9b9b9b" stroke-width="0.9"/></svg>
<svg style="left:1272px;top:691px;" width="18" height="18" viewBox="0 0 18 18"><text x='3.2' y='8.6' font-size='8.6' fill='#6a6a6a' font-weight='400' text-anchor='start' font-family='Liberation Sans' >abc</text><text x='12.6' y='17.2' font-size='7.2' fill='#6a6a6a' font-weight='400' text-anchor='start' font-family='Liberation Sans' >X</text><circle cx="1.8" cy="9" r="1.2" fill="none" stroke="#b0b0b0" stroke-width="0.8"/></svg>
<svg style="left:1272px;top:713px;" width="18" height="18" viewBox="0 0 18 18"><text x='3.2' y='8.6' font-size='8.6' fill='#6a6a6a' font-weight='400' text-anchor='start' font-family='Liberation Sans' >abc</text><text x='12.6' y='17.2' font-size='7.2' fill='#6a6a6a' font-weight='400' text-anchor='start' font-family='Liberation Sans' >Y</text><circle cx="1.8" cy="9" r="1.2" fill="none" stroke="#b0b0b0" stroke-width="0.8"/></svg>
<svg style="left:1272px;top:735px;" width="18" height="18" viewBox="0 0 18 18"><text x='3.2' y='8.6' font-size='8.6' fill='#6a6a6a' font-weight='400' text-anchor='start' font-family='Liberation Sans' >abc</text><text x='12.6' y='17.2' font-size='7.2' fill='#6a6a6a' font-weight='400' text-anchor='start' font-family='Liberation Sans' >Z</text><circle cx="1.8" cy="9" r="1.2" fill="none" stroke="#b0b0b0" stroke-width="0.8"/></svg>
<svg style="left:1272px;top:758px;" width="18" height="18" viewBox="0 0 18 18"><text x='0' y='14.4' font-size='16.5' fill='#6a6a6a' font-weight='700' text-anchor='start' font-family='Liberation Sans' >A</text><path d="M16.8 3.4 L11 14" stroke="#a8a8a8" stroke-width="1.5"/><path d="M11.4 13.4 Q11.2 16 8.4 16.8 Q10.2 15.6 10.2 13.6 Z" fill="#444"/></svg>
<svg style="left:1272px;top:781px;" width="18" height="18" viewBox="0 0 18 18"><rect x="0.8" y="4.8" width="16.6" height="8.6" rx="0.8" fill="none" stroke="#6a6a6a" stroke-width="1.1"/><text x='2.6' y='12' font-size='7.4' fill='#6a6a6a' font-weight='700' text-anchor='start' font-family='Liberation Sans' >A</text><path d="M9 11.4 H15.4" stroke="#b0b0b0" stroke-width="0.9" stroke-dasharray="1.4 0.9"/></svg>
<svg style="left:1272px;top:803px;" width="18" height="18" viewBox="0 0 18 18"><text x='9' y='9.8' font-size='11' fill='#6a6a6a' font-weight='400' text-anchor='middle' font-family='Liberation Sans' >A</text><text x='1.6' y='17.4' font-size='6.4' fill='#a6a6a6' font-weight='400' text-anchor='start' font-family='Liberation Sans' >xn</text><path d="M9.6 15.2 H16.4 M14.6 13.8 L16.4 15.2 L14.6 16.6" fill="none" stroke="#a6a6a6" stroke-width="0.9"/></svg>
<svg style="left:1272px;top:863px;" width="18" height="18" viewBox="0 0 18 18"><circle cx="9.4" cy="7.8" r="1.4" fill="none" stroke="#ababab" stroke-width="0.9"/><text x='12.6' y='15.6' font-size='7' fill='#7a7a7a' font-weight='400' text-anchor='start' font-family='Liberation Sans' >X</text></svg>
<svg style="left:1272px;top:885px;" width="18" height="18" viewBox="0 0 18 18"><circle cx="9.4" cy="7.8" r="1.4" fill="none" stroke="#ababab" stroke-width="0.9"/><text x='12.6' y='15.6' font-size='7' fill='#7a7a7a' font-weight='400' text-anchor='start' font-family='Liberation Sans' >Y</text></svg>
<svg style="left:1272px;top:907px;" width="18" height="18" viewBox="0 0 18 18"><circle cx="9.4" cy="7.8" r="1.4" fill="none" stroke="#ababab" stroke-width="0.9"/><text x='12.6' y='15.6' font-size='7' fill='#7a7a7a' font-weight='400' text-anchor='start' font-family='Liberation Sans' >Z</text></svg>
<svg style="left:1272px;top:967px;" width="18" height="18" viewBox="0 0 18 18"><g transform="translate(18.4,0) scale(-1,1)"><text x='1.6' y='9.8' font-size='10.5' fill='#6a6a6a' font-weight='400' text-anchor='start' font-family='Liberation Sans' letter-spacing='-0.4'>AB</text></g><path d="M2 14.4 H16.4 M4.6 12.4 L2 14.4 L4.6 16.4" fill="none" stroke="#7d7d7d" stroke-width="1.1"/></svg>
<svg style="left:1272px;top:989px;" width="18" height="18" viewBox="0 0 18 18"><path d="M3.6 11.4 Q2 6 7.2 3.8 H10" fill="none" stroke="#9b9b9b" stroke-width="1.2"/><path d="M8.4 1.4 L11 3.8 L8.4 6.2" fill="none" stroke="#9b9b9b" stroke-width="1.2"/><path d="M14.4 6.6 Q16 12 10.8 14.2 H8" fill="none" stroke="#9b9b9b" stroke-width="1.2"/><path d="M9.6 11.8 L7 14.2 L9.6 16.6" fill="none" stroke="#9b9b9b" stroke-width="1.2"/></svg>
<svg style="left:1272px;top:1011px;" width="18" height="18" viewBox="0 0 18 18"><rect x="2" y="2" width="14" height="14" fill="none" stroke="#b4b4b4" stroke-width="1" stroke-dasharray="3.4 2"/></svg>
<svg style="left:1272px;top:1033px;" width="18" height="18" viewBox="0 0 18 18"><path d="M14 1.4 H1.6 V14.4 H7.4" fill="none" stroke="#7d7d7d" stroke-width="1.1"/><rect x="10" y="10.4" width="7.4" height="6.2" fill="#6a6a6a"/><path d="M11.6 10.4 V8.6 Q11.6 6.6 13.7 6.6 Q15.8 6.6 15.8 8.6 V10.4" fill="none" stroke="#6a6a6a" stroke-width="1.2"/><rect x="13" y="12.4" width="1.4" height="2" fill="#f0f0f0"/></svg>
<svg style="left:1272px;top:1055px;" width="18" height="18" viewBox="0 0 18 18"><path d="M3 3.4 H12 M3 7.2 H15.6 M3 11 H14 M3 14.8 H15.6" stroke="#7d7d7d" stroke-width="1"/></svg>
<svg style="left:1272px;top:1077px;" width="18" height="18" viewBox="0 0 18 18"><path d="M3.4 1.4 H11 L15 5.4 V16.6 H3.4 Z" fill="#fafafa" stroke="#7d7d7d" stroke-width="1"/><path d="M11 1.4 V5.4 H15" fill="none" stroke="#7d7d7d" stroke-width="0.9"/><path d="M5.6 8.4 L7.4 10.2 L11.6 6.4 M5.6 12.6 L7.4 14.4 L11.6 10.6" fill="none" stroke="#a2a2a2" stroke-width="1"/></svg>
<svg style="left:1272px;top:1099px;" width="18" height="18" viewBox="0 0 18 18"><g transform="rotate(180 9 9)"><text x='9' y='15.6' font-size='17' fill='#5a5a5a' font-weight='700' text-anchor='middle' font-family='Liberation Sans' >A</text></g></svg>
<svg style="left:1272px;top:1122px;" width="18" height="17" viewBox="0 0 18 17"><path d="M2 8.4 L7 13.4 L16 3.4" fill="none" stroke="#9b9b9b" stroke-width="1.8"/></svg>
<div style="left:1px;top:1151px;width:1656px;height:3px;background:#fdfdfd;"></div>
<div style="left:1px;top:58px;width:2px;height:1200px;background:#fdfdfd;"></div>
<div style="left:1655px;top:165px;width:2px;height:1093px;background:#fdfdfd;"></div>
<div style="left:3px;top:1154px;width:1652px;height:25px;background:#c0c0c0;border:1px solid #8c8c8c;border-top:2px solid #7d7d7d;"></div>
<div style="left:7px;top:1163px;font-size:11.5px;line-height:11.5px;color:#000;white-space:pre;letter-spacing:0.031px;font-weight:700;">Command window</div>
<svg style="left:1616px;top:1161px;" width="10" height="10" viewBox="0 0 10 10"><path d="M2.6 3 V0.9 H8.6 V6.2 H6.6" fill="none" stroke="#111" stroke-width="1.4"/><rect x="0.8" y="3.2" width="5.8" height="5.6" fill="none" stroke="#111" stroke-width="1.4"/></svg>
<svg style="left:1638px;top:1162px;" width="9" height="9" viewBox="0 0 9 9"><path d="M0.8 0.8 L8 8 M8 0.8 L0.8 8" stroke="#111" stroke-width="1.5"/></svg>
<div style="left:3px;top:1179px;width:1652px;height:63px;background:#fff;border:1px solid #a0a0a0;border-top:none;overflow:hidden;"></div>
<div style="left:1637px;top:1179px;width:17px;height:62px;background:#f0f0f0;"></div>
<svg style="left:1640px;top:1186px;" width="10" height="6" viewBox="0 0 10 6"><path d="M0 5.4 H9.6 L4.8 0.4 Z" fill="#000"/></svg>
<svg style="left:1640px;top:1228px;" width="10" height="6" viewBox="0 0 10 6"><path d="M0 0.4 H9.6 L4.8 5.4 Z" fill="#000"/></svg>
<div style="left:1639px;top:1215px;width:14px;height:9px;background:#cdcdcd;"></div>
<div style="left:4px;top:1179px;width:1630px;height:61px;overflow:hidden;">
<div style="left:4.4px;top:-3px;font-size:12.5px;line-height:12.5px;color:#000;white-space:pre;letter-spacing:0.192px;">Command: «Cancel»</div>
<div style="left:4.4px;top:13px;font-size:12.5px;line-height:12.5px;color:#000;white-space:pre;letter-spacing:0.123px;">Command:</div>
<div style="left:4.4px;top:29px;font-size:12.5px;line-height:12.5px;color:#000;white-space:pre;letter-spacing:0.035px;">Command: _EDITANNOTATION</div>
<div style="left:4.4px;top:45px;font-size:12.5px;line-height:12.5px;color:#000;white-space:pre;letter-spacing:-0.036px;">1 found</div>
</div>
<div style="left:3px;top:1242px;width:1652px;height:16px;background:#fff;"></div>
<div style="left:5.4px;top:1271px;font-size:12px;line-height:12px;color:#000;white-space:pre;letter-spacing:-0.360px;">DraftSight 2019 x64</div>
<div style="left:559px;top:1264px;width:25px;height:24px;background:#e1e1e1;border:1px solid #adadad;"></div>
<div style="left:591px;top:1261px;width:97px;height:30px;border:1px solid #c3c3c3;"></div>
<div style="left:594px;top:1264px;width:25px;height:24px;background:#e1e1e1;border:1px solid #adadad;"></div>
<div style="left:627px;top:1264px;width:25px;height:24px;background:#e1e1e1;border:1px solid #adadad;"></div>
<div style="left:660px;top:1264px;width:25px;height:24px;background:#cce4f7;border:1px solid #0078d7;"></div>
<div style="left:694px;top:1261px;width:254px;height:30px;border:1px solid #c3c3c3;"></div>
<div style="left:697px;top:1264px;width:25px;height:24px;background:#e1e1e1;border:1px solid #adadad;"></div>
<div style="left:730px;top:1264px;width:25px;height:24px;background:#cce4f7;border:1px solid #0078d7;"></div>
<div style="left:763px;top:1264px;width:25px;height:24px;background:#cce4f7;border:1px solid #0078d7;"></div>
<div style="left:796px;top:1264px;width:25px;height:24px;background:#cce4f7;border:1px solid #0078d7;"></div>
<div style="left:829px;top:1264px;width:25px;height:24px;background:#cce4f7;border:1px solid #0078d7;"></div>
<div style="left:862px;top:1266px;width:83px;height:19px;background:#e1e1e1;border:1px solid #adadad;"></div>
<div style="left:867.5px;top:1270px;font-size:12px;line-height:12px;color:#000;white-space:pre;letter-spacing:-0.286px;">Dynamic CCS</div>
<div style="left:954px;top:1261px;width:129px;height:30px;border:1px solid #c3c3c3;"></div>
<div style="left:957px;top:1266px;width:93px;height:20px;background:#e1e1e1;border:1px solid #adadad;"></div>
<div style="left:961.5px;top:1271px;font-size:12px;line-height:12px;color:#000;white-space:pre;letter-spacing:0.234px;">Annotation</div>
<svg style="left:1032px;top:1272px;" width="12" height="8" viewBox="0 0 12 8"><path d="M0 0.4 H11.6 L5.8 7.2 Z" fill="#111"/></svg>
<div style="left:1059px;top:1271px;font-size:12px;line-height:12px;color:#222;white-space:pre;letter-spacing:-0.672px;">(1:1)</div>
<div style="left:1090px;top:1271px;font-size:12px;line-height:12px;color:#000;white-space:pre;letter-spacing:-0.593px;">(765.1071,73.7134,0)</div>
<svg style="left:562px;top:1267px;" width="20" height="19" viewBox="0 0 20 19"><path d="M2.4 2.6 H12.4 V6 H10.4 V14.4 H4.4 V6 H2.4 Z" fill="#6f6f6f" stroke="#222" stroke-width="1"/><path d="M4.4 8 H10.4 M4.4 10.4 H10.4 M4.4 12.6 H10.4" stroke="#222" stroke-width="0.8"/><path d="M8.4 13.4 L13.4 11 L18.4 13.4 L13.4 15.8 Z" fill="#f5c518" stroke="#7a5b00" stroke-width="0.7"/><path d="M8.4 15.6 L13.4 13.2 L18.4 15.6 L13.4 18 Z" fill="#f5c518" stroke="#7a5b00" stroke-width="0.7"/></svg>
<svg style="left:597px;top:1267px;" width="20" height="19" viewBox="0 0 20 19"><path d="M4 1 V17 M8.6 1 V17 M13.2 1 V17 M0.6 4.6 H17 M0.6 9 H17 M0.6 13.4 H17" stroke="#9fc0cf" stroke-width="1.1"/><path d="M7.8 6.4 V16.8 L10.4 14.4 L12.2 18.4 L13.8 17.6 L12 13.8 L15.4 13.6 Z" fill="#fff" stroke="#222" stroke-width="1.1"/><circle cx="4.6" cy="4" r="2.3" fill="#d8262c"/></svg>
<svg style="left:630px;top:1267px;" width="20" height="19" viewBox="0 0 20 19"><path d="M4.4 1.6 V17.4 M8.4 1.6 V17.4 M12.4 1.6 V17.4 M16.2 1.6 V17.4 M2 4.2 H18.4 M2 8 H18.4 M2 11.8 H18.4 M2 15.6 H18.4" stroke="#111" stroke-width="1.5"/></svg>
<svg style="left:663px;top:1267px;" width="20" height="19" viewBox="0 0 20 19"><path d="M3.6 5.6 L14.4 2.6 V16.4 L3.6 13.4 Z" fill="none" stroke="#111" stroke-width="1.3"/><path d="M1 9.5 H18" stroke="#111" stroke-width="1.1" stroke-dasharray="4 1.4 1.2 1.4"/></svg>
<svg style="left:700px;top:1267px;" width="20" height="19" viewBox="0 0 20 19"><circle cx="7.6" cy="9.4" r="5.6" fill="none" stroke="#222" stroke-width="1.3"/><path d="M7.6 9.4 L15.4 2 M7.6 9.4 L15.4 17 M15 9.4 H19" stroke="#1583dd" stroke-width="1.1"/><path d="M7.6 1.2 V9.4" stroke="#1583dd" stroke-width="1.1"/><path d="M6.4 8 L10 9.4 L6.4 10.8 Z" fill="#1583dd"/></svg>
<svg style="left:733px;top:1267px;" width="20" height="19" viewBox="0 0 20 19"><path d="M6 3 H2.4 V10 H6 M2.4 6.4 H5.4" fill="none" stroke="#1583dd" stroke-width="1.2"/><path d="M8.4 2.4 V13.6 L11 11.2 L12.8 15.2 L14.4 14.4 L12.6 10.6 L16 10.4 Z" fill="#fff" stroke="#222" stroke-width="1.1"/><path d="M1.4 16.6 H16" stroke="#222" stroke-width="1.2" stroke-dasharray="3.4 1.4"/><path d="M18.4 2 V11" stroke="#1583dd" stroke-width="1" stroke-dasharray="3 1.6"/><circle cx="16.6" cy="15.6" r="2.1" fill="#d8262c"/></svg>
<svg style="left:766px;top:1267px;" width="20" height="19" viewBox="0 0 20 19"><path d="M6 3 H2.4 V10 H6 M2.4 6.4 H5.4" fill="none" stroke="#1583dd" stroke-width="1.2"/><path d="M9.6 4.4 H14.4 M8.6 8.2 H15.4 M7.2 12 H16.8 M5.6 15.8 H18.4" stroke="#222" stroke-width="1.3"/><path d="M10.6 3 L6.4 17.4 M13.4 3 L17.6 17.4" stroke="#222" stroke-width="0.9" stroke-dasharray="1.4 1.2"/></svg>
<svg style="left:799px;top:1267px;" width="20" height="19" viewBox="0 0 20 19"><rect x="1.6" y="1.6" width="16.6" height="15.8" rx="2.4" fill="none" stroke="#222" stroke-width="1.3" stroke-dasharray="3.6 1.6"/><path d="M5.4 14.4 V5 H11 L14.8 8.8 V14.4 Z" fill="none" stroke="#222" stroke-width="1.3"/></svg>
<svg style="left:832px;top:1267px;" width="20" height="19" viewBox="0 0 20 19"><rect x="7.4" y="6.6" width="10" height="10.4" fill="none" stroke="#222" stroke-width="1.4"/><rect x="9.6" y="1.4" width="4.6" height="2.6" fill="#1583dd"/><rect x="1.2" y="10.4" width="2.8" height="4.4" fill="#1583dd"/><path d="M2.6 8.6 Q3 4 8 3" fill="none" stroke="#1583dd" stroke-width="1" stroke-dasharray="1.6 1.4"/><path d="M15.6 3 Q17.6 3.6 18 5.4" fill="none" stroke="#1583dd" stroke-width="1" stroke-dasharray="1.6 1.4"/><path d="M2.8 16 Q3.4 17.6 5.4 17.8" fill="none" stroke="#1583dd" stroke-width="1" stroke-dasharray="1.6 1.4"/></svg>
<svg style="left:1643px;top:1282px;" width="12" height="12" viewBox="0 0 12 12"><g fill="#fafafa"><rect x="8.4" y="0.4" width="2" height="2"/><rect x="4.4" y="4.4" width="2" height="2"/><rect x="8.4" y="4.4" width="2" height="2"/><rect x="0.4" y="8.4" width="2" height="2"/><rect x="4.4" y="8.4" width="2" height="2"/><rect x="8.4" y="8.4" width="2" height="2"/></g></svg>
<div style="left:0px;top:0px;width:1658px;height:1px;background:#17356f;"></div>
<div style="left:0px;top:0px;width:1px;height:1296px;background:#17356f;"></div>
<div style="left:1656px;top:0px;width:1px;height:1296px;background:#b9c1d2;"></div>
<div style="left:1657px;top:0px;width:1px;height:1296px;background:#17356f;"></div>
<div style="left:0px;top:1294px;width:1658px;height:1px;background:#6e80a3;"></div>
<div style="left:0px;top:1295px;width:1658px;height:1px;background:#17356f;"></div>
<div style="left:763px;top:427px;width:313px;height:170px;background:#f0f0f0;border:1px solid #1883d7;"></div>
<div style="left:764px;top:428px;width:311px;height:30px;background:#fff;"></div>
<svg style="left:771px;top:434px;" width="18" height="17" viewBox="0 0 18 17"><path d="M8.6 0.6 L12.6 8.6 L7.4 8 Z" fill="#9cc3cc"/><path d="M2.6 2.6 Q6 1.6 7.6 3 Q8.4 6 5.4 9 Z M4.6 4.2 L5.6 7 Q6.6 5.6 6.2 4.4 Z" fill="#86c440" fill-rule="evenodd"/><rect x="0.2" y="9.4" width="17" height="7.2" fill="#111"/></svg>
<div style="left:771.6px;top:443.9px;font-size:6.6px;line-height:7px;color:#fff;font-weight:700;letter-spacing:0.1px;">2019</div>
<div style="left:793.2px;top:437px;font-size:12px;line-height:12px;color:#000;white-space:pre;letter-spacing:0.042px;">Edit BlockAttribute</div>
<svg style="left:1054px;top:436px;" width="12" height="12" viewBox="0 0 12 12"><path d="M1 1.2 L11 11 M11 1.2 L1 11" stroke="#111" stroke-width="1.15"/></svg>
<div style="left:774.6px;top:475px;font-size:10.5px;line-height:10.5px;color:#000;white-space:pre;letter-spacing:-0.134px;">Name:</div>
<div style="left:774.6px;top:501px;font-size:10.5px;line-height:10.5px;color:#000;white-space:pre;letter-spacing:0.127px;">Caption:</div>
<div style="left:774.6px;top:528px;font-size:10.5px;line-height:10.5px;color:#000;white-space:pre;letter-spacing:0.080px;">Value:</div>
<div style="left:827px;top:469px;width:237px;height:20px;background:#fff;border:1px solid #ababab;"></div>
<div style="left:830px;top:473px;width:24.4px;height:12.6px;background:#0078d7;"></div>
<div style="left:830.6px;top:474px;font-size:10.5px;line-height:10.5px;color:#fff;white-space:pre;letter-spacing:-1.605px;">XXXX</div>
<div style="left:854.4px;top:473px;width:1px;height:12.6px;background:#000;"></div>
<div style="left:827px;top:495px;width:237px;height:20px;background:#fff;border:1px solid #ababab;"></div>
<div style="left:829.4px;top:501px;font-size:10.5px;line-height:10.5px;color:#000;white-space:pre;letter-spacing:-0.012px;">Enter Client Name</div>
<div style="left:827px;top:521px;width:231px;height:22px;background:#fff;border:1px solid #7a7a7a;"></div>
<div style="left:831.4px;top:528px;font-size:10.5px;line-height:10.5px;color:#000;white-space:pre;letter-spacing:0.068px;">Client</div>
<div style="left:828px;top:561px;width:73px;height:22px;background:#e1e1e1;border:2px solid #0078d7;"></div>
<div style="left:909px;top:561px;width:73px;height:22px;background:#e1e1e1;border:1px solid #adadad;"></div>
<div style="left:990px;top:561px;width:73px;height:22px;background:#e1e1e1;border:1px solid #adadad;"></div>
<svg style="left:846px;top:565px;" width="16" height="14" viewBox="0 0 16 14"><path d="M2.6 8 L5.8 11 L13.6 2.2" fill="none" stroke="#8a9a88" stroke-width="2.6" transform="translate(0.7,0.8)" opacity="0.5"/><path d="M2.6 8 L5.8 11 L13.6 2.2" fill="none" stroke="#27b023" stroke-width="2.6"/></svg>
<div style="left:866.6px;top:568px;font-size:10.5px;line-height:10.5px;color:#000;white-space:pre;letter-spacing:-1.172px;">OK</div>
<svg style="left:918px;top:564px;" width="17" height="16" viewBox="0 0 17 16"><path d="M2.6 2.4 L14 14 M14 2.4 L2.6 14" fill="none" stroke="#e61a1a" stroke-width="2.9" stroke-linecap="round"/></svg>
<div style="left:938.8px;top:568px;font-size:10.5px;line-height:10.5px;color:#000;white-space:pre;letter-spacing:-0.298px;">Cancel</div>
<svg style="left:1005px;top:564px;" width="17" height="16" viewBox="0 0 17 16"><defs><linearGradient id="hq" x1="0" y1="0" x2="0" y2="1"><stop offset="0" stop-color="#8db0dc"/><stop offset="1" stop-color="#3a69aa"/></linearGradient></defs><rect x="0.8" y="0.8" width="15.4" height="14.4" rx="1.4" fill="url(#hq)" stroke="#3a5f98" stroke-width="0.9"/></svg>
<div style="left:1009.6px;top:565.4px;font-size:13px;line-height:13px;color:#fff;font-weight:700;">?</div>
<div style="left:1025.3px;top:568px;font-size:10.5px;line-height:10.5px;color:#000;white-space:pre;letter-spacing:-0.303px;">Help</div>
</body></html>
